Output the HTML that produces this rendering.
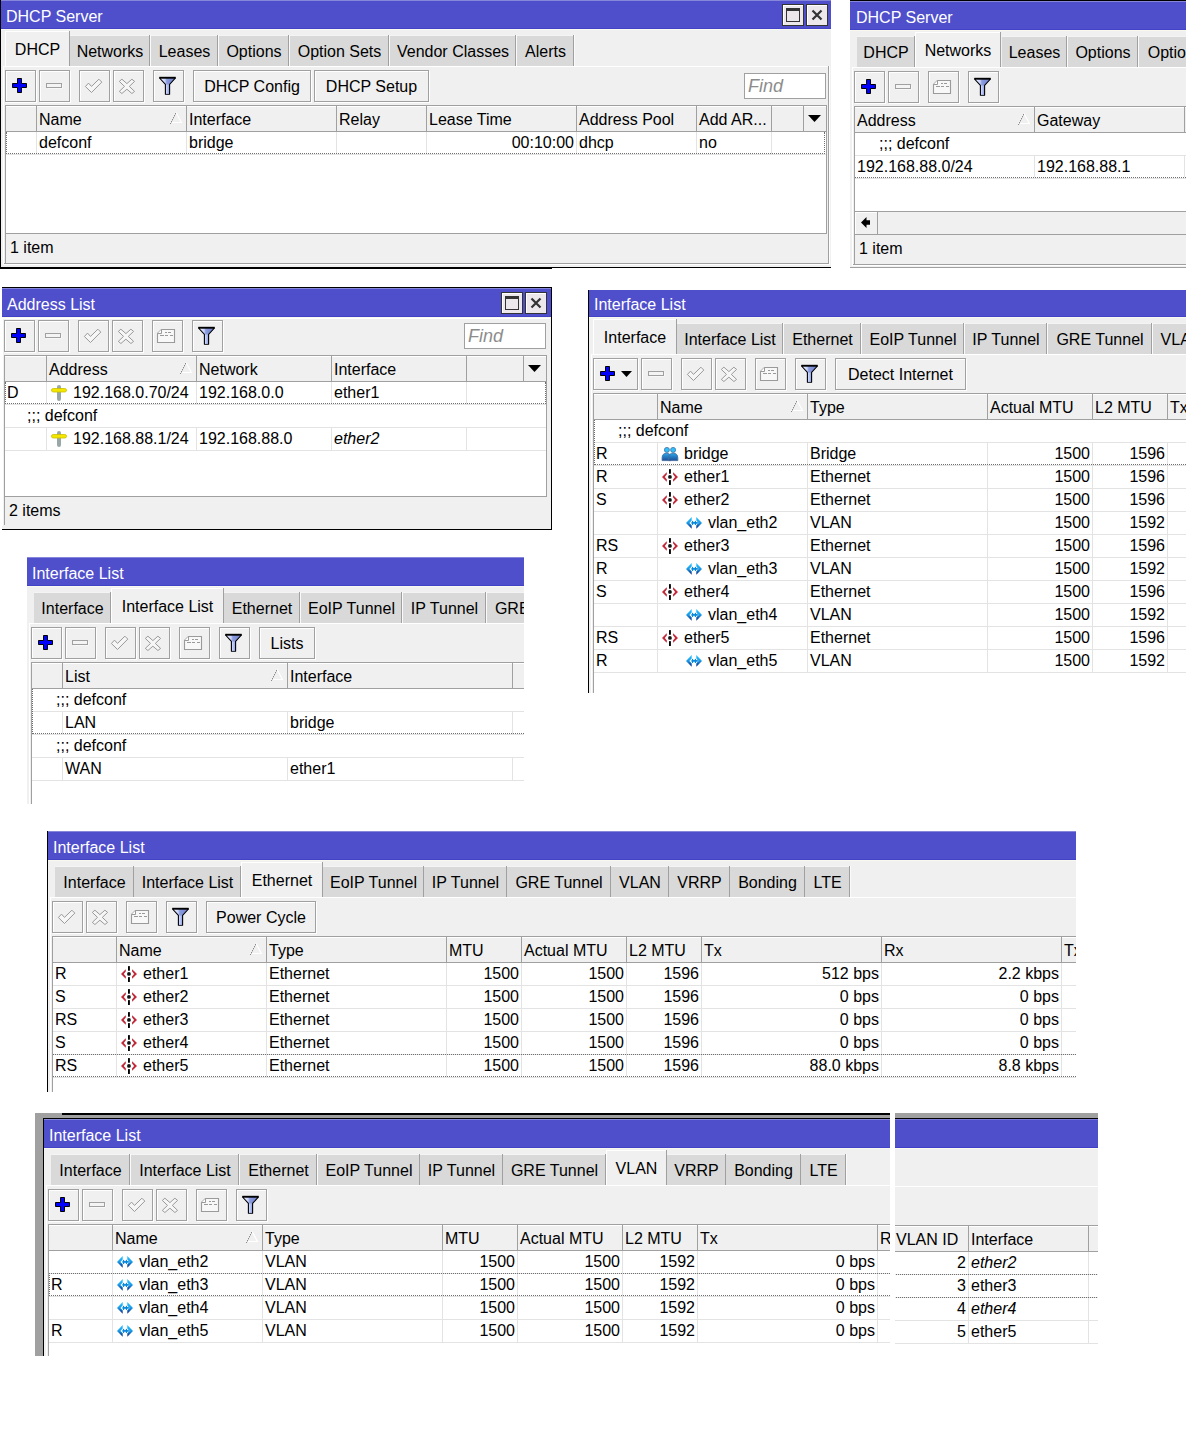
<!DOCTYPE html><html><head><meta charset="utf-8"><style>
html,body{margin:0;padding:0;background:#fff;width:1186px;height:1443px;overflow:hidden;position:relative}
body div, body svg{position:absolute}
.clip{left:0;top:0;width:1186px;height:1443px}
.t{font-family:"Liberation Sans",sans-serif;font-size:16px;color:#000;white-space:nowrap}
</style></head><body>
<div class="clip" style="clip-path:inset(0px 355px 1173px 0px)">
<div style="left:0px;top:0px;width:831px;height:268px;background:#f0f0f0"></div>
<div style="left:0px;top:0px;width:831px;height:29px;background:#4f4fcc"></div>
<div style="left:0px;top:0px;width:831px;height:1px;background:#8686da"></div>
<div style="left:0px;top:28px;width:831px;height:1px;background:#4242c6"></div>
<div style="left:0px;top:29px;width:831px;height:1px;background:#f8f8ee"></div>
<div class="t" style="left:6px;top:2px;height:29px;line-height:29px;color:#fff">DHCP Server</div>
<div style="left:782px;top:4px;width:22px;height:22px;background:#ebe7eb;border:1px solid #333;box-sizing:border-box;box-shadow:inset 1px 1px 0 #fff"></div>
<div style="left:786px;top:8px;width:14px;height:14px;border:1.5px solid #333;border-top-width:3px;box-sizing:border-box"></div>
<div style="left:806px;top:4px;width:22px;height:22px;background:#ebe7eb;border:1px solid #333;box-sizing:border-box;box-shadow:inset 1px 1px 0 #fff"></div>
<svg style="left:811px;top:9px" width="12" height="12" viewBox="0 0 12 12"><path d="M1.5 1.5L10.5 10.5M10.5 1.5L1.5 10.5" stroke="#333" stroke-width="2.2"/></svg>
<div style="left:0px;top:0px;width:1px;height:268px;background:#000"></div>
<div style="left:5px;top:31px;width:65px;height:35px;background:#f0f0f0;border-left:1px solid #fff;border-top:1px solid #fff;box-sizing:border-box"></div>
<div style="left:69px;top:31px;width:1px;height:35px;background:#a0a0a0"></div>
<div class="t" style="left:5px;top:31px;width:65px;height:35px;line-height:37px;text-align:center">DHCP</div>
<div style="left:70px;top:35px;width:80px;height:31px;background:#d9d9d9;border-top:1px solid #f4f4f4;box-sizing:border-box"></div>
<div style="left:149px;top:35px;width:1px;height:31px;background:#a0a0a0"></div>
<div style="left:150px;top:35px;width:1px;height:31px;background:#fafafa"></div>
<div class="t" style="left:70px;top:35px;width:80px;height:31px;line-height:34px;text-align:center">Networks</div>
<div style="left:151px;top:35px;width:67px;height:31px;background:#d9d9d9;border-top:1px solid #f4f4f4;box-sizing:border-box"></div>
<div style="left:217px;top:35px;width:1px;height:31px;background:#a0a0a0"></div>
<div style="left:218px;top:35px;width:1px;height:31px;background:#fafafa"></div>
<div class="t" style="left:151px;top:35px;width:67px;height:31px;line-height:34px;text-align:center">Leases</div>
<div style="left:219px;top:35px;width:70px;height:31px;background:#d9d9d9;border-top:1px solid #f4f4f4;box-sizing:border-box"></div>
<div style="left:288px;top:35px;width:1px;height:31px;background:#a0a0a0"></div>
<div style="left:289px;top:35px;width:1px;height:31px;background:#fafafa"></div>
<div class="t" style="left:219px;top:35px;width:70px;height:31px;line-height:34px;text-align:center">Options</div>
<div style="left:290px;top:35px;width:99px;height:31px;background:#d9d9d9;border-top:1px solid #f4f4f4;box-sizing:border-box"></div>
<div style="left:388px;top:35px;width:1px;height:31px;background:#a0a0a0"></div>
<div style="left:389px;top:35px;width:1px;height:31px;background:#fafafa"></div>
<div class="t" style="left:290px;top:35px;width:99px;height:31px;line-height:34px;text-align:center">Option Sets</div>
<div style="left:390px;top:35px;width:126px;height:31px;background:#d9d9d9;border-top:1px solid #f4f4f4;box-sizing:border-box"></div>
<div style="left:515px;top:35px;width:1px;height:31px;background:#a0a0a0"></div>
<div style="left:516px;top:35px;width:1px;height:31px;background:#fafafa"></div>
<div class="t" style="left:390px;top:35px;width:126px;height:31px;line-height:34px;text-align:center">Vendor Classes</div>
<div style="left:517px;top:35px;width:57px;height:31px;background:#d9d9d9;border-top:1px solid #f4f4f4;box-sizing:border-box"></div>
<div style="left:573px;top:35px;width:1px;height:31px;background:#a0a0a0"></div>
<div style="left:574px;top:35px;width:1px;height:31px;background:#fafafa"></div>
<div class="t" style="left:517px;top:35px;width:57px;height:31px;line-height:34px;text-align:center">Alerts</div>
<div style="left:3px;top:66px;width:826px;height:1px;background:#fff"></div>
<div style="left:3px;top:66px;width:1px;height:198px;background:#fff"></div>
<div style="left:828px;top:66px;width:1px;height:198px;background:#a0a0a0"></div>
<div style="left:829px;top:66px;width:1px;height:199px;background:#fff"></div>
<div style="left:4px;top:263px;width:825px;height:1px;background:#a0a0a0"></div>
<div style="left:3px;top:264px;width:827px;height:1px;background:#fff"></div>
<div style="left:5px;top:70px;width:31px;height:32px;border:1px solid #a0a0a0;box-sizing:border-box;background:#f0f0f0;box-shadow:inset 1px 1px 0 #fff, 1px 1px 0 #fff"></div>
<svg style="left:12px;top:78px" width="15" height="15" viewBox="0 0 15 15"><path d="M5.5 0.5h4v5h5v4h-5v5h-4v-5h-5v-4h5z" fill="#0000ff" stroke="#000" stroke-width="1"/></svg>
<div style="left:39px;top:70px;width:31px;height:32px;border:1px solid #a0a0a0;box-sizing:border-box;background:#f0f0f0;box-shadow:inset 1px 1px 0 #fff, 1px 1px 0 #fff"></div>
<svg style="left:46px;top:83px" width="17" height="6" viewBox="0 0 17 6"><rect x="1.5" y="1.5" width="15" height="4" fill="#fff" stroke="none"/><rect x="0.5" y="0.5" width="15" height="4" fill="#f4f4f4" stroke="#a0a0a0"/></svg>
<div style="left:79px;top:70px;width:31px;height:32px;border:1px solid #a0a0a0;box-sizing:border-box;background:#f0f0f0;box-shadow:inset 1px 1px 0 #fff, 1px 1px 0 #fff"></div>
<svg style="left:79px;top:70px" width="31" height="32" viewBox="0 0 31 32"><path d="M6.4 16.5 L9.5 13.1 L12.5 16.4 L19.9 9.2 L22.8 12.1 L12.5 22.5 Z" fill="#f6f6f6" stroke="#9a9a9a" stroke-width="1" stroke-linejoin="round"/></svg>
<div style="left:113px;top:70px;width:31px;height:32px;border:1px solid #a0a0a0;box-sizing:border-box;background:#f0f0f0;box-shadow:inset 1px 1px 0 #fff, 1px 1px 0 #fff"></div>
<svg style="left:113px;top:70px" width="31" height="32" viewBox="0 0 31 32"><path d="M6.3 11.4 L8.9 9.2 L13.9 13.6 L18.9 9.2 L21.6 11.4 L16.3 16.4 L21.6 21.4 L18.9 23.5 L13.9 19.2 L8.9 23.5 L6.3 21.4 L11.5 16.4 Z" fill="#f6f6f6" stroke="#9a9a9a" stroke-width="1" stroke-linejoin="round"/></svg>
<div style="left:153px;top:70px;width:31px;height:32px;border:1px solid #a0a0a0;box-sizing:border-box;background:#f0f0f0;box-shadow:inset 1px 1px 0 #fff, 1px 1px 0 #fff"></div>
<svg style="left:153px;top:70px" width="31" height="32" viewBox="0 0 31 32"><defs><linearGradient id="fg" x1="0" x2="1" y1="0" y2="0"><stop offset="0" stop-color="#f4f6ff"/><stop offset="0.35" stop-color="#c8d2f8"/><stop offset="0.45" stop-color="#8c9de0"/><stop offset="1" stop-color="#6a7cc8"/></linearGradient><linearGradient id="fs" x1="0" x2="1" y1="0" y2="0"><stop offset="0" stop-color="#d0dcff"/><stop offset="1" stop-color="#98a8e8"/></linearGradient></defs><path d="M6.5 8 H22.5 L16.6 14.4 V24.3 H12.4 V14.4 Z" fill="url(#fg)" stroke="#000" stroke-width="1.1" stroke-linejoin="round"/><rect x="13" y="14.5" width="3" height="9.3" fill="url(#fs)"/><path d="M6.3 7.6 H22.7" stroke="#000" stroke-width="1.6"/></svg>
<div style="left:193px;top:70px;width:118px;height:32px;border:1px solid #a0a0a0;box-sizing:border-box;background:#f0f0f0;box-shadow:inset 1px 1px 0 #fff, 1px 1px 0 #fff"></div>
<div class="t" style="left:193px;top:71px;width:118px;height:32px;line-height:32px;text-align:center">DHCP Config</div>
<div style="left:314px;top:70px;width:115px;height:32px;border:1px solid #a0a0a0;box-sizing:border-box;background:#f0f0f0;box-shadow:inset 1px 1px 0 #fff, 1px 1px 0 #fff"></div>
<div class="t" style="left:314px;top:71px;width:115px;height:32px;line-height:32px;text-align:center">DHCP Setup</div>
<div style="left:744px;top:73px;width:82px;height:26px;background:#fff;border:1px solid #a0a0a0;box-sizing:border-box"></div>
<div class="t" style="left:748px;top:73px;height:26px;line-height:26px;color:#8c8c8c;font-style:italic;font-size:18px">Find</div>
<div style="left:5px;top:105px;width:822px;height:129px;background:#fff"></div>
<div style="left:5px;top:105px;width:821px;height:27px;background:#f0f0f0;border-top:1px solid #a0a0a0;border-left:1px solid #a0a0a0;border-bottom:1px solid #a0a0a0;box-sizing:border-box"></div>
<div style="left:36px;top:105px;width:1px;height:27px;background:#a0a0a0"></div>
<div style="left:6px;top:106px;width:30px;height:1px;background:#fff"></div>
<div style="left:186px;top:105px;width:1px;height:27px;background:#a0a0a0"></div>
<div style="left:37px;top:106px;width:149px;height:1px;background:#fff"></div>
<div class="t" style="left:39px;top:106px;height:26px;line-height:27px">Name</div>
<div style="left:336px;top:105px;width:1px;height:27px;background:#a0a0a0"></div>
<div style="left:187px;top:106px;width:149px;height:1px;background:#fff"></div>
<div class="t" style="left:189px;top:106px;height:26px;line-height:27px">Interface</div>
<div style="left:426px;top:105px;width:1px;height:27px;background:#a0a0a0"></div>
<div style="left:337px;top:106px;width:89px;height:1px;background:#fff"></div>
<div class="t" style="left:339px;top:106px;height:26px;line-height:27px">Relay</div>
<div style="left:576px;top:105px;width:1px;height:27px;background:#a0a0a0"></div>
<div style="left:427px;top:106px;width:149px;height:1px;background:#fff"></div>
<div class="t" style="left:429px;top:106px;height:26px;line-height:27px">Lease Time</div>
<div style="left:696px;top:105px;width:1px;height:27px;background:#a0a0a0"></div>
<div style="left:577px;top:106px;width:119px;height:1px;background:#fff"></div>
<div class="t" style="left:579px;top:106px;height:26px;line-height:27px">Address Pool</div>
<div style="left:771px;top:105px;width:1px;height:27px;background:#a0a0a0"></div>
<div style="left:697px;top:106px;width:74px;height:1px;background:#fff"></div>
<div class="t" style="left:699px;top:106px;height:26px;line-height:27px">Add AR...</div>
<div style="left:803px;top:105px;width:1px;height:27px;background:#a0a0a0"></div>
<div style="left:772px;top:106px;width:31px;height:1px;background:#fff"></div>
<div style="left:826px;top:105px;width:1px;height:27px;background:#a0a0a0"></div>
<div style="left:804px;top:106px;width:22px;height:1px;background:#fff"></div>
<svg style="left:170px;top:112px" width="12" height="12" viewBox="0 0 12 12"><path d="M6 0.5 L11.5 10.5 H0.5" fill="none" stroke="#fff" stroke-width="1.2"/><rect x="5" y="1" width="1" height="1" fill="#8a8a8a"/><rect x="5" y="2" width="1" height="1" fill="#c8c8c8"/><rect x="4" y="3" width="1" height="1" fill="#8a8a8a"/><rect x="4" y="4" width="1" height="1" fill="#c8c8c8"/><rect x="3" y="5" width="1" height="1" fill="#8a8a8a"/><rect x="3" y="6" width="1" height="1" fill="#c8c8c8"/><rect x="2" y="7" width="1" height="1" fill="#8a8a8a"/><rect x="2" y="8" width="1" height="1" fill="#c8c8c8"/><rect x="1" y="9" width="1" height="1" fill="#8a8a8a"/><rect x="1" y="10" width="1" height="1" fill="#c8c8c8"/><rect x="0" y="11" width="1" height="1" fill="#8a8a8a"/><rect x="0" y="12" width="1" height="1" fill="#c8c8c8"/></svg>
<svg style="left:808px;top:115px" width="13" height="7" viewBox="0 0 13 7"><path d="M0 0H13L6.5 7Z" fill="#000"/></svg>
<div style="left:5px;top:132px;width:821px;height:23px;background:#fff"></div>
<div style="left:5px;top:154px;width:821px;height:1px;background:#e3e3e3"></div>
<div style="left:36px;top:132px;width:1px;height:23px;background:#e3e3e3"></div>
<div style="left:186px;top:132px;width:1px;height:23px;background:#e3e3e3"></div>
<div style="left:336px;top:132px;width:1px;height:23px;background:#e3e3e3"></div>
<div style="left:426px;top:132px;width:1px;height:23px;background:#e3e3e3"></div>
<div style="left:576px;top:132px;width:1px;height:23px;background:#e3e3e3"></div>
<div style="left:696px;top:132px;width:1px;height:23px;background:#e3e3e3"></div>
<div style="left:771px;top:132px;width:1px;height:23px;background:#e3e3e3"></div>
<div class="t" style="left:8px;top:132px;height:23px;line-height:22px;"></div>
<div class="t" style="left:39px;top:132px;height:23px;line-height:22px;">defconf</div>
<div class="t" style="left:189px;top:132px;height:23px;line-height:22px;">bridge</div>
<div class="t" style="left:339px;top:132px;height:23px;line-height:22px;"></div>
<div class="t" style="left:426px;width:148px;text-align:right;top:132px;height:23px;line-height:22px;">00:10:00</div>
<div class="t" style="left:579px;top:132px;height:23px;line-height:22px;">dhcp</div>
<div class="t" style="left:699px;top:132px;height:23px;line-height:22px;">no</div>
<div class="t" style="left:774px;top:132px;height:23px;line-height:22px;"></div>
<div class="t" style="left:806px;top:132px;height:23px;line-height:22px;"></div>
<div style="left:6px;top:132px;width:819px;height:22px;border:1px dotted #707070;box-sizing:border-box;border-top:none"></div>
<div style="left:5px;top:105px;width:1px;height:128px;background:#a0a0a0"></div>
<div style="left:826px;top:105px;width:1px;height:128px;background:#a0a0a0"></div>
<div style="left:5px;top:233px;width:822px;height:1px;background:#a0a0a0"></div>
<div style="left:5px;top:233px;width:1px;height:30px;background:#a0a0a0"></div>
<div class="t" style="left:10px;top:233px;height:30px;line-height:30px;">1 item</div>
</div>
<div class="clip" style="clip-path:inset(0px 355px 1173px 0px)">
<div style="left:0px;top:267px;width:552px;height:2px;background:#000"></div>
<div style="left:552px;top:267px;width:279px;height:1px;background:#000"></div>
</div>
<div class="clip" style="clip-path:inset(0px 0px 1173px 850px)">
<div style="left:850px;top:1px;width:400px;height:267px;background:#f0f0f0"></div>
<div style="left:850px;top:1px;width:400px;height:29px;background:#4f4fcc"></div>
<div style="left:850px;top:1px;width:400px;height:1px;background:#8686da"></div>
<div style="left:850px;top:29px;width:400px;height:1px;background:#4242c6"></div>
<div style="left:850px;top:30px;width:400px;height:1px;background:#f8f8ee"></div>
<div class="t" style="left:856px;top:3px;height:29px;line-height:29px;color:#fff">DHCP Server</div>
<div style="left:857px;top:36px;width:58px;height:31px;background:#d9d9d9;border-top:1px solid #f4f4f4;box-sizing:border-box"></div>
<div style="left:914px;top:36px;width:1px;height:31px;background:#a0a0a0"></div>
<div style="left:915px;top:36px;width:1px;height:31px;background:#fafafa"></div>
<div class="t" style="left:857px;top:36px;width:58px;height:31px;line-height:34px;text-align:center">DHCP</div>
<div style="left:915px;top:32px;width:86px;height:35px;background:#f0f0f0;border-left:1px solid #fff;border-top:1px solid #fff;box-sizing:border-box"></div>
<div style="left:1000px;top:32px;width:1px;height:35px;background:#a0a0a0"></div>
<div class="t" style="left:915px;top:32px;width:86px;height:35px;line-height:37px;text-align:center">Networks</div>
<div style="left:1002px;top:36px;width:65px;height:31px;background:#d9d9d9;border-top:1px solid #f4f4f4;box-sizing:border-box"></div>
<div style="left:1066px;top:36px;width:1px;height:31px;background:#a0a0a0"></div>
<div style="left:1067px;top:36px;width:1px;height:31px;background:#fafafa"></div>
<div class="t" style="left:1002px;top:36px;width:65px;height:31px;line-height:34px;text-align:center">Leases</div>
<div style="left:1068px;top:36px;width:70px;height:31px;background:#d9d9d9;border-top:1px solid #f4f4f4;box-sizing:border-box"></div>
<div style="left:1137px;top:36px;width:1px;height:31px;background:#a0a0a0"></div>
<div style="left:1138px;top:36px;width:1px;height:31px;background:#fafafa"></div>
<div class="t" style="left:1068px;top:36px;width:70px;height:31px;line-height:34px;text-align:center">Options</div>
<div style="left:1139px;top:36px;width:101px;height:31px;background:#d9d9d9;border-top:1px solid #f4f4f4;box-sizing:border-box"></div>
<div style="left:1239px;top:36px;width:1px;height:31px;background:#a0a0a0"></div>
<div style="left:1240px;top:36px;width:1px;height:31px;background:#fafafa"></div>
<div class="t" style="left:1139px;top:36px;width:101px;height:31px;line-height:34px;text-align:center">Option Sets</div>
<div style="left:850px;top:0px;width:336px;height:1px;background:#000"></div>
<div style="left:852px;top:67px;width:338px;height:1px;background:#fff"></div>
<div style="left:852px;top:67px;width:1px;height:198px;background:#fff"></div>
<div style="left:1189px;top:67px;width:1px;height:198px;background:#a0a0a0"></div>
<div style="left:1190px;top:67px;width:1px;height:199px;background:#fff"></div>
<div style="left:853px;top:264px;width:337px;height:1px;background:#a0a0a0"></div>
<div style="left:852px;top:265px;width:339px;height:1px;background:#fff"></div>
<div style="left:854px;top:71px;width:31px;height:32px;border:1px solid #a0a0a0;box-sizing:border-box;background:#f0f0f0;box-shadow:inset 1px 1px 0 #fff, 1px 1px 0 #fff"></div>
<svg style="left:861px;top:79px" width="15" height="15" viewBox="0 0 15 15"><path d="M5.5 0.5h4v5h5v4h-5v5h-4v-5h-5v-4h5z" fill="#0000ff" stroke="#000" stroke-width="1"/></svg>
<div style="left:888px;top:71px;width:31px;height:32px;border:1px solid #a0a0a0;box-sizing:border-box;background:#f0f0f0;box-shadow:inset 1px 1px 0 #fff, 1px 1px 0 #fff"></div>
<svg style="left:895px;top:84px" width="17" height="6" viewBox="0 0 17 6"><rect x="1.5" y="1.5" width="15" height="4" fill="#fff" stroke="none"/><rect x="0.5" y="0.5" width="15" height="4" fill="#f4f4f4" stroke="#a0a0a0"/></svg>
<div style="left:928px;top:71px;width:31px;height:32px;border:1px solid #a0a0a0;box-sizing:border-box;background:#f0f0f0;box-shadow:inset 1px 1px 0 #fff, 1px 1px 0 #fff"></div>
<svg style="left:928px;top:71px" width="31" height="32" viewBox="0 0 31 32"><path d="M5.5 13.5 L9.5 9.5 H22.5 V22.5 H5.5 Z" fill="#f8f8f8" stroke="#9a9a9a" stroke-width="1.1"/><path d="M5.5 13.5 H9.5 V9.5" fill="#fff" stroke="#9a9a9a" stroke-width="1"/><path d="M13 12.5h2M16 12.5h3M8 15.5h4M13 15.5h3M18 15.5h3" stroke="#9a9a9a" stroke-width="1"/></svg>
<div style="left:968px;top:71px;width:31px;height:32px;border:1px solid #a0a0a0;box-sizing:border-box;background:#f0f0f0;box-shadow:inset 1px 1px 0 #fff, 1px 1px 0 #fff"></div>
<svg style="left:968px;top:71px" width="31" height="32" viewBox="0 0 31 32"><defs><linearGradient id="fg" x1="0" x2="1" y1="0" y2="0"><stop offset="0" stop-color="#f4f6ff"/><stop offset="0.35" stop-color="#c8d2f8"/><stop offset="0.45" stop-color="#8c9de0"/><stop offset="1" stop-color="#6a7cc8"/></linearGradient><linearGradient id="fs" x1="0" x2="1" y1="0" y2="0"><stop offset="0" stop-color="#d0dcff"/><stop offset="1" stop-color="#98a8e8"/></linearGradient></defs><path d="M6.5 8 H22.5 L16.6 14.4 V24.3 H12.4 V14.4 Z" fill="url(#fg)" stroke="#000" stroke-width="1.1" stroke-linejoin="round"/><rect x="13" y="14.5" width="3" height="9.3" fill="url(#fs)"/><path d="M6.3 7.6 H22.7" stroke="#000" stroke-width="1.6"/></svg>
<div style="left:854px;top:106px;width:340px;height:106px;background:#fff"></div>
<div style="left:854px;top:106px;width:446px;height:27px;background:#f0f0f0;border-top:1px solid #a0a0a0;border-left:1px solid #a0a0a0;border-bottom:1px solid #a0a0a0;box-sizing:border-box"></div>
<div style="left:1034px;top:106px;width:1px;height:27px;background:#a0a0a0"></div>
<div style="left:855px;top:107px;width:179px;height:1px;background:#fff"></div>
<div class="t" style="left:857px;top:107px;height:26px;line-height:27px">Address</div>
<div style="left:1184px;top:106px;width:1px;height:27px;background:#a0a0a0"></div>
<div style="left:1035px;top:107px;width:149px;height:1px;background:#fff"></div>
<div class="t" style="left:1037px;top:107px;height:26px;line-height:27px">Gateway</div>
<div style="left:1300px;top:106px;width:1px;height:27px;background:#a0a0a0"></div>
<div style="left:1185px;top:107px;width:115px;height:1px;background:#fff"></div>
<svg style="left:1018px;top:113px" width="12" height="12" viewBox="0 0 12 12"><path d="M6 0.5 L11.5 10.5 H0.5" fill="none" stroke="#fff" stroke-width="1.2"/><rect x="5" y="1" width="1" height="1" fill="#8a8a8a"/><rect x="5" y="2" width="1" height="1" fill="#c8c8c8"/><rect x="4" y="3" width="1" height="1" fill="#8a8a8a"/><rect x="4" y="4" width="1" height="1" fill="#c8c8c8"/><rect x="3" y="5" width="1" height="1" fill="#8a8a8a"/><rect x="3" y="6" width="1" height="1" fill="#c8c8c8"/><rect x="2" y="7" width="1" height="1" fill="#8a8a8a"/><rect x="2" y="8" width="1" height="1" fill="#c8c8c8"/><rect x="1" y="9" width="1" height="1" fill="#8a8a8a"/><rect x="1" y="10" width="1" height="1" fill="#c8c8c8"/><rect x="0" y="11" width="1" height="1" fill="#8a8a8a"/><rect x="0" y="12" width="1" height="1" fill="#c8c8c8"/></svg>
<div style="left:854px;top:133px;width:446px;height:23px;background:#fff"></div>
<div style="left:854px;top:155px;width:446px;height:1px;background:#e3e3e3"></div>
<div class="t" style="left:879px;top:133px;height:23px;line-height:22px">;;; defconf</div>
<div style="left:854px;top:156px;width:446px;height:23px;background:#fff"></div>
<div style="left:854px;top:178px;width:446px;height:1px;background:#e3e3e3"></div>
<div style="left:1034px;top:156px;width:1px;height:23px;background:#e3e3e3"></div>
<div style="left:1184px;top:156px;width:1px;height:23px;background:#e3e3e3"></div>
<div style="left:1300px;top:156px;width:1px;height:23px;background:#e3e3e3"></div>
<div class="t" style="left:857px;top:156px;height:23px;line-height:22px;">192.168.88.0/24</div>
<div class="t" style="left:1037px;top:156px;height:23px;line-height:22px;">192.168.88.1</div>
<div class="t" style="left:1187px;top:156px;height:23px;line-height:22px;"></div>
<div style="left:855px;top:177px;width:335px;height:1px;background:#fff"></div>
<div style="left:855px;top:177px;width:335px;height:1px;border-top:1px dotted #707070;box-sizing:border-box"></div>
<div style="left:854px;top:106px;width:1px;height:130px;background:#a0a0a0"></div>
<div style="left:854px;top:211px;width:340px;height:1px;background:#a0a0a0"></div>
<div style="left:855px;top:212px;width:330px;height:22px;background:#f0f0f0"></div>
<div style="left:855px;top:212px;width:22px;height:22px;background:#f0f0f0;border-right:1px solid #a0a0a0;box-shadow:inset 1px 1px 0 #fff"></div>
<svg style="left:861px;top:217px" width="9" height="12" viewBox="0 0 9 12"><path d="M0 5.5L5.5 0V3.3H9V7.7H5.5V11Z" fill="#000"/></svg>
<div style="left:854px;top:234px;width:336px;height:1px;background:#a0a0a0"></div>
<div style="left:854px;top:234px;width:1px;height:30px;background:#a0a0a0"></div>
<div class="t" style="left:859px;top:234px;height:30px;line-height:30px;">1 item</div>
<div style="left:850px;top:267px;width:336px;height:1px;background:#a0a0a0"></div>
</div>
<div class="clip" style="clip-path:inset(287px 633px 912px 2px)">
<div style="left:-1px;top:288px;width:552px;height:241px;background:#f0f0f0"></div>
<div style="left:-1px;top:288px;width:552px;height:29px;background:#4f4fcc"></div>
<div style="left:-1px;top:288px;width:552px;height:1px;background:#8686da"></div>
<div style="left:-1px;top:316px;width:552px;height:1px;background:#4242c6"></div>
<div style="left:-1px;top:317px;width:552px;height:1px;background:#f8f8ee"></div>
<div class="t" style="left:7px;top:290px;height:29px;line-height:29px;color:#fff">Address List</div>
<div style="left:501px;top:292px;width:22px;height:22px;background:#ebe7eb;border:1px solid #333;box-sizing:border-box;box-shadow:inset 1px 1px 0 #fff"></div>
<div style="left:505px;top:296px;width:14px;height:14px;border:1.5px solid #333;border-top-width:3px;box-sizing:border-box"></div>
<div style="left:525px;top:292px;width:22px;height:22px;background:#ebe7eb;border:1px solid #333;box-sizing:border-box;box-shadow:inset 1px 1px 0 #fff"></div>
<svg style="left:530px;top:297px" width="12" height="12" viewBox="0 0 12 12"><path d="M1.5 1.5L10.5 10.5M10.5 1.5L1.5 10.5" stroke="#333" stroke-width="2.2"/></svg>
<div style="left:2px;top:287px;width:550px;height:1px;background:#000"></div>
<div style="left:2px;top:318px;width:548px;height:1px;background:#fff"></div>
<div style="left:2px;top:318px;width:1px;height:208px;background:#fff"></div>
<div style="left:4px;top:320px;width:31px;height:32px;border:1px solid #a0a0a0;box-sizing:border-box;background:#f0f0f0;box-shadow:inset 1px 1px 0 #fff, 1px 1px 0 #fff"></div>
<svg style="left:11px;top:328px" width="15" height="15" viewBox="0 0 15 15"><path d="M5.5 0.5h4v5h5v4h-5v5h-4v-5h-5v-4h5z" fill="#0000ff" stroke="#000" stroke-width="1"/></svg>
<div style="left:38px;top:320px;width:31px;height:32px;border:1px solid #a0a0a0;box-sizing:border-box;background:#f0f0f0;box-shadow:inset 1px 1px 0 #fff, 1px 1px 0 #fff"></div>
<svg style="left:45px;top:333px" width="17" height="6" viewBox="0 0 17 6"><rect x="1.5" y="1.5" width="15" height="4" fill="#fff" stroke="none"/><rect x="0.5" y="0.5" width="15" height="4" fill="#f4f4f4" stroke="#a0a0a0"/></svg>
<div style="left:78px;top:320px;width:31px;height:32px;border:1px solid #a0a0a0;box-sizing:border-box;background:#f0f0f0;box-shadow:inset 1px 1px 0 #fff, 1px 1px 0 #fff"></div>
<svg style="left:78px;top:320px" width="31" height="32" viewBox="0 0 31 32"><path d="M6.4 16.5 L9.5 13.1 L12.5 16.4 L19.9 9.2 L22.8 12.1 L12.5 22.5 Z" fill="#f6f6f6" stroke="#9a9a9a" stroke-width="1" stroke-linejoin="round"/></svg>
<div style="left:112px;top:320px;width:31px;height:32px;border:1px solid #a0a0a0;box-sizing:border-box;background:#f0f0f0;box-shadow:inset 1px 1px 0 #fff, 1px 1px 0 #fff"></div>
<svg style="left:112px;top:320px" width="31" height="32" viewBox="0 0 31 32"><path d="M6.3 11.4 L8.9 9.2 L13.9 13.6 L18.9 9.2 L21.6 11.4 L16.3 16.4 L21.6 21.4 L18.9 23.5 L13.9 19.2 L8.9 23.5 L6.3 21.4 L11.5 16.4 Z" fill="#f6f6f6" stroke="#9a9a9a" stroke-width="1" stroke-linejoin="round"/></svg>
<div style="left:152px;top:320px;width:31px;height:32px;border:1px solid #a0a0a0;box-sizing:border-box;background:#f0f0f0;box-shadow:inset 1px 1px 0 #fff, 1px 1px 0 #fff"></div>
<svg style="left:152px;top:320px" width="31" height="32" viewBox="0 0 31 32"><path d="M5.5 13.5 L9.5 9.5 H22.5 V22.5 H5.5 Z" fill="#f8f8f8" stroke="#9a9a9a" stroke-width="1.1"/><path d="M5.5 13.5 H9.5 V9.5" fill="#fff" stroke="#9a9a9a" stroke-width="1"/><path d="M13 12.5h2M16 12.5h3M8 15.5h4M13 15.5h3M18 15.5h3" stroke="#9a9a9a" stroke-width="1"/></svg>
<div style="left:192px;top:320px;width:31px;height:32px;border:1px solid #a0a0a0;box-sizing:border-box;background:#f0f0f0;box-shadow:inset 1px 1px 0 #fff, 1px 1px 0 #fff"></div>
<svg style="left:192px;top:320px" width="31" height="32" viewBox="0 0 31 32"><defs><linearGradient id="fg" x1="0" x2="1" y1="0" y2="0"><stop offset="0" stop-color="#f4f6ff"/><stop offset="0.35" stop-color="#c8d2f8"/><stop offset="0.45" stop-color="#8c9de0"/><stop offset="1" stop-color="#6a7cc8"/></linearGradient><linearGradient id="fs" x1="0" x2="1" y1="0" y2="0"><stop offset="0" stop-color="#d0dcff"/><stop offset="1" stop-color="#98a8e8"/></linearGradient></defs><path d="M6.5 8 H22.5 L16.6 14.4 V24.3 H12.4 V14.4 Z" fill="url(#fg)" stroke="#000" stroke-width="1.1" stroke-linejoin="round"/><rect x="13" y="14.5" width="3" height="9.3" fill="url(#fs)"/><path d="M6.3 7.6 H22.7" stroke="#000" stroke-width="1.6"/></svg>
<div style="left:464px;top:323px;width:82px;height:26px;background:#fff;border:1px solid #a0a0a0;box-sizing:border-box"></div>
<div class="t" style="left:468px;top:323px;height:26px;line-height:26px;color:#8c8c8c;font-style:italic;font-size:18px">Find</div>
<div style="left:4px;top:355px;width:543px;height:142px;background:#fff"></div>
<div style="left:4px;top:355px;width:542px;height:27px;background:#f0f0f0;border-top:1px solid #a0a0a0;border-left:1px solid #a0a0a0;border-bottom:1px solid #a0a0a0;box-sizing:border-box"></div>
<div style="left:46px;top:355px;width:1px;height:27px;background:#a0a0a0"></div>
<div style="left:5px;top:356px;width:41px;height:1px;background:#fff"></div>
<div style="left:196px;top:355px;width:1px;height:27px;background:#a0a0a0"></div>
<div style="left:47px;top:356px;width:149px;height:1px;background:#fff"></div>
<div class="t" style="left:49px;top:356px;height:26px;line-height:27px">Address</div>
<div style="left:331px;top:355px;width:1px;height:27px;background:#a0a0a0"></div>
<div style="left:197px;top:356px;width:134px;height:1px;background:#fff"></div>
<div class="t" style="left:199px;top:356px;height:26px;line-height:27px">Network</div>
<div style="left:466px;top:355px;width:1px;height:27px;background:#a0a0a0"></div>
<div style="left:332px;top:356px;width:134px;height:1px;background:#fff"></div>
<div class="t" style="left:334px;top:356px;height:26px;line-height:27px">Interface</div>
<div style="left:523px;top:355px;width:1px;height:27px;background:#a0a0a0"></div>
<div style="left:467px;top:356px;width:56px;height:1px;background:#fff"></div>
<div style="left:546px;top:355px;width:1px;height:27px;background:#a0a0a0"></div>
<div style="left:524px;top:356px;width:22px;height:1px;background:#fff"></div>
<svg style="left:180px;top:362px" width="12" height="12" viewBox="0 0 12 12"><path d="M6 0.5 L11.5 10.5 H0.5" fill="none" stroke="#fff" stroke-width="1.2"/><rect x="5" y="1" width="1" height="1" fill="#8a8a8a"/><rect x="5" y="2" width="1" height="1" fill="#c8c8c8"/><rect x="4" y="3" width="1" height="1" fill="#8a8a8a"/><rect x="4" y="4" width="1" height="1" fill="#c8c8c8"/><rect x="3" y="5" width="1" height="1" fill="#8a8a8a"/><rect x="3" y="6" width="1" height="1" fill="#c8c8c8"/><rect x="2" y="7" width="1" height="1" fill="#8a8a8a"/><rect x="2" y="8" width="1" height="1" fill="#c8c8c8"/><rect x="1" y="9" width="1" height="1" fill="#8a8a8a"/><rect x="1" y="10" width="1" height="1" fill="#c8c8c8"/><rect x="0" y="11" width="1" height="1" fill="#8a8a8a"/><rect x="0" y="12" width="1" height="1" fill="#c8c8c8"/></svg>
<svg style="left:528px;top:365px" width="13" height="7" viewBox="0 0 13 7"><path d="M0 0H13L6.5 7Z" fill="#000"/></svg>
<div style="left:4px;top:382px;width:542px;height:23px;background:#fff"></div>
<div style="left:4px;top:404px;width:542px;height:1px;background:#e3e3e3"></div>
<div style="left:46px;top:382px;width:1px;height:23px;background:#e3e3e3"></div>
<div style="left:196px;top:382px;width:1px;height:23px;background:#e3e3e3"></div>
<div style="left:331px;top:382px;width:1px;height:23px;background:#e3e3e3"></div>
<div style="left:466px;top:382px;width:1px;height:23px;background:#e3e3e3"></div>
<div class="t" style="left:7px;top:382px;height:23px;line-height:22px;">D</div>
<svg style="left:51px;top:385px" width="17" height="17" viewBox="0 0 17 17"><rect x="6" y="0" width="4" height="16" rx="2" fill="#9aa7a7"/><rect x="0.5" y="3.5" width="15" height="3.5" rx="1.7" fill="#f5e600" stroke="#c8c000" stroke-width="0.8"/></svg>
<div class="t" style="left:73px;top:382px;height:23px;line-height:22px;">192.168.0.70/24</div>
<div class="t" style="left:199px;top:382px;height:23px;line-height:22px;">192.168.0.0</div>
<div class="t" style="left:334px;top:382px;height:23px;line-height:22px;">ether1</div>
<div class="t" style="left:469px;top:382px;height:23px;line-height:22px;"></div>
<div class="t" style="left:526px;top:382px;height:23px;line-height:22px;"></div>
<div style="left:4px;top:405px;width:542px;height:23px;background:#fff"></div>
<div style="left:4px;top:427px;width:542px;height:1px;background:#e3e3e3"></div>
<div class="t" style="left:27px;top:405px;height:23px;line-height:22px">;;; defconf</div>
<div style="left:4px;top:428px;width:542px;height:23px;background:#fff"></div>
<div style="left:4px;top:450px;width:542px;height:1px;background:#e3e3e3"></div>
<div style="left:46px;top:428px;width:1px;height:23px;background:#e3e3e3"></div>
<div style="left:196px;top:428px;width:1px;height:23px;background:#e3e3e3"></div>
<div style="left:331px;top:428px;width:1px;height:23px;background:#e3e3e3"></div>
<div style="left:466px;top:428px;width:1px;height:23px;background:#e3e3e3"></div>
<div class="t" style="left:7px;top:428px;height:23px;line-height:22px;"></div>
<svg style="left:51px;top:431px" width="17" height="17" viewBox="0 0 17 17"><rect x="6" y="0" width="4" height="16" rx="2" fill="#9aa7a7"/><rect x="0.5" y="3.5" width="15" height="3.5" rx="1.7" fill="#f5e600" stroke="#c8c000" stroke-width="0.8"/></svg>
<div class="t" style="left:73px;top:428px;height:23px;line-height:22px;">192.168.88.1/24</div>
<div class="t" style="left:199px;top:428px;height:23px;line-height:22px;">192.168.88.0</div>
<div class="t" style="left:334px;top:428px;height:23px;line-height:22px;font-style:italic">ether2</div>
<div class="t" style="left:469px;top:428px;height:23px;line-height:22px;"></div>
<div class="t" style="left:526px;top:428px;height:23px;line-height:22px;"></div>
<div style="left:5px;top:382px;width:541px;height:22px;border:1px dotted #707070;box-sizing:border-box;border-top:none"></div>
<div style="left:4px;top:355px;width:1px;height:142px;background:#a0a0a0"></div>
<div style="left:546px;top:355px;width:1px;height:142px;background:#a0a0a0"></div>
<div style="left:4px;top:496px;width:543px;height:1px;background:#a0a0a0"></div>
<div style="left:4px;top:496px;width:1px;height:29px;background:#a0a0a0"></div>
<div class="t" style="left:9px;top:496px;height:29px;line-height:29px;">2 items</div>
<div style="left:551px;top:287px;width:1px;height:243px;background:#000"></div>
<div style="left:2px;top:529px;width:550px;height:1px;background:#000"></div>
</div>
<div class="clip" style="clip-path:inset(290px 0px 750px 588px)">
<div style="left:588px;top:288px;width:700px;height:405px;background:#f0f0f0"></div>
<div style="left:588px;top:288px;width:700px;height:29px;background:#4f4fcc"></div>
<div style="left:588px;top:288px;width:700px;height:1px;background:#8686da"></div>
<div style="left:588px;top:316px;width:700px;height:1px;background:#4242c6"></div>
<div style="left:588px;top:317px;width:700px;height:1px;background:#f8f8ee"></div>
<div class="t" style="left:594px;top:290px;height:29px;line-height:29px;color:#fff">Interface List</div>
<div style="left:588px;top:288px;width:1px;height:405px;background:#000"></div>
<div style="left:593px;top:319px;width:84px;height:35px;background:#f0f0f0;border-left:1px solid #fff;border-top:1px solid #fff;box-sizing:border-box"></div>
<div style="left:676px;top:319px;width:1px;height:35px;background:#a0a0a0"></div>
<div class="t" style="left:593px;top:319px;width:84px;height:35px;line-height:37px;text-align:center">Interface</div>
<div style="left:677px;top:323px;width:106px;height:31px;background:#d9d9d9;border-top:1px solid #f4f4f4;box-sizing:border-box"></div>
<div style="left:782px;top:323px;width:1px;height:31px;background:#a0a0a0"></div>
<div style="left:783px;top:323px;width:1px;height:31px;background:#fafafa"></div>
<div class="t" style="left:677px;top:323px;width:106px;height:31px;line-height:34px;text-align:center">Interface List</div>
<div style="left:784px;top:323px;width:77px;height:31px;background:#d9d9d9;border-top:1px solid #f4f4f4;box-sizing:border-box"></div>
<div style="left:860px;top:323px;width:1px;height:31px;background:#a0a0a0"></div>
<div style="left:861px;top:323px;width:1px;height:31px;background:#fafafa"></div>
<div class="t" style="left:784px;top:323px;width:77px;height:31px;line-height:34px;text-align:center">Ethernet</div>
<div style="left:862px;top:323px;width:102px;height:31px;background:#d9d9d9;border-top:1px solid #f4f4f4;box-sizing:border-box"></div>
<div style="left:963px;top:323px;width:1px;height:31px;background:#a0a0a0"></div>
<div style="left:964px;top:323px;width:1px;height:31px;background:#fafafa"></div>
<div class="t" style="left:862px;top:323px;width:102px;height:31px;line-height:34px;text-align:center">EoIP Tunnel</div>
<div style="left:965px;top:323px;width:82px;height:31px;background:#d9d9d9;border-top:1px solid #f4f4f4;box-sizing:border-box"></div>
<div style="left:1046px;top:323px;width:1px;height:31px;background:#a0a0a0"></div>
<div style="left:1047px;top:323px;width:1px;height:31px;background:#fafafa"></div>
<div class="t" style="left:965px;top:323px;width:82px;height:31px;line-height:34px;text-align:center">IP Tunnel</div>
<div style="left:1048px;top:323px;width:104px;height:31px;background:#d9d9d9;border-top:1px solid #f4f4f4;box-sizing:border-box"></div>
<div style="left:1151px;top:323px;width:1px;height:31px;background:#a0a0a0"></div>
<div style="left:1152px;top:323px;width:1px;height:31px;background:#fafafa"></div>
<div class="t" style="left:1048px;top:323px;width:104px;height:31px;line-height:34px;text-align:center">GRE Tunnel</div>
<div style="left:1153px;top:323px;width:57px;height:31px;background:#d9d9d9;border-top:1px solid #f4f4f4;box-sizing:border-box"></div>
<div style="left:1209px;top:323px;width:1px;height:31px;background:#a0a0a0"></div>
<div style="left:1210px;top:323px;width:1px;height:31px;background:#fafafa"></div>
<div class="t" style="left:1153px;top:323px;width:57px;height:31px;line-height:34px;text-align:center">VLAN</div>
<div style="left:591px;top:354px;width:600px;height:1px;background:#fff"></div>
<div style="left:591px;top:354px;width:1px;height:340px;background:#fff"></div>
<div style="left:593px;top:358px;width:45px;height:32px;border:1px solid #a0a0a0;box-sizing:border-box;background:#f0f0f0;box-shadow:inset 1px 1px 0 #fff, 1px 1px 0 #fff"></div>
<svg style="left:600px;top:366px" width="15" height="15" viewBox="0 0 15 15"><path d="M5.5 0.5h4v5h5v4h-5v5h-4v-5h-5v-4h5z" fill="#0000ff" stroke="#000" stroke-width="1"/></svg>
<svg style="left:621px;top:371px" width="11" height="6" viewBox="0 0 11 6"><path d="M0 0H11L5.5 6Z" fill="#000"/></svg>
<div style="left:641px;top:358px;width:31px;height:32px;border:1px solid #a0a0a0;box-sizing:border-box;background:#f0f0f0;box-shadow:inset 1px 1px 0 #fff, 1px 1px 0 #fff"></div>
<svg style="left:648px;top:371px" width="17" height="6" viewBox="0 0 17 6"><rect x="1.5" y="1.5" width="15" height="4" fill="#fff" stroke="none"/><rect x="0.5" y="0.5" width="15" height="4" fill="#f4f4f4" stroke="#a0a0a0"/></svg>
<div style="left:681px;top:358px;width:31px;height:32px;border:1px solid #a0a0a0;box-sizing:border-box;background:#f0f0f0;box-shadow:inset 1px 1px 0 #fff, 1px 1px 0 #fff"></div>
<svg style="left:681px;top:358px" width="31" height="32" viewBox="0 0 31 32"><path d="M6.4 16.5 L9.5 13.1 L12.5 16.4 L19.9 9.2 L22.8 12.1 L12.5 22.5 Z" fill="#f6f6f6" stroke="#9a9a9a" stroke-width="1" stroke-linejoin="round"/></svg>
<div style="left:715px;top:358px;width:31px;height:32px;border:1px solid #a0a0a0;box-sizing:border-box;background:#f0f0f0;box-shadow:inset 1px 1px 0 #fff, 1px 1px 0 #fff"></div>
<svg style="left:715px;top:358px" width="31" height="32" viewBox="0 0 31 32"><path d="M6.3 11.4 L8.9 9.2 L13.9 13.6 L18.9 9.2 L21.6 11.4 L16.3 16.4 L21.6 21.4 L18.9 23.5 L13.9 19.2 L8.9 23.5 L6.3 21.4 L11.5 16.4 Z" fill="#f6f6f6" stroke="#9a9a9a" stroke-width="1" stroke-linejoin="round"/></svg>
<div style="left:755px;top:358px;width:31px;height:32px;border:1px solid #a0a0a0;box-sizing:border-box;background:#f0f0f0;box-shadow:inset 1px 1px 0 #fff, 1px 1px 0 #fff"></div>
<svg style="left:755px;top:358px" width="31" height="32" viewBox="0 0 31 32"><path d="M5.5 13.5 L9.5 9.5 H22.5 V22.5 H5.5 Z" fill="#f8f8f8" stroke="#9a9a9a" stroke-width="1.1"/><path d="M5.5 13.5 H9.5 V9.5" fill="#fff" stroke="#9a9a9a" stroke-width="1"/><path d="M13 12.5h2M16 12.5h3M8 15.5h4M13 15.5h3M18 15.5h3" stroke="#9a9a9a" stroke-width="1"/></svg>
<div style="left:795px;top:358px;width:31px;height:32px;border:1px solid #a0a0a0;box-sizing:border-box;background:#f0f0f0;box-shadow:inset 1px 1px 0 #fff, 1px 1px 0 #fff"></div>
<svg style="left:795px;top:358px" width="31" height="32" viewBox="0 0 31 32"><defs><linearGradient id="fg" x1="0" x2="1" y1="0" y2="0"><stop offset="0" stop-color="#f4f6ff"/><stop offset="0.35" stop-color="#c8d2f8"/><stop offset="0.45" stop-color="#8c9de0"/><stop offset="1" stop-color="#6a7cc8"/></linearGradient><linearGradient id="fs" x1="0" x2="1" y1="0" y2="0"><stop offset="0" stop-color="#d0dcff"/><stop offset="1" stop-color="#98a8e8"/></linearGradient></defs><path d="M6.5 8 H22.5 L16.6 14.4 V24.3 H12.4 V14.4 Z" fill="url(#fg)" stroke="#000" stroke-width="1.1" stroke-linejoin="round"/><rect x="13" y="14.5" width="3" height="9.3" fill="url(#fs)"/><path d="M6.3 7.6 H22.7" stroke="#000" stroke-width="1.6"/></svg>
<div style="left:835px;top:358px;width:131px;height:32px;border:1px solid #a0a0a0;box-sizing:border-box;background:#f0f0f0;box-shadow:inset 1px 1px 0 #fff, 1px 1px 0 #fff"></div>
<div class="t" style="left:835px;top:359px;width:131px;height:32px;line-height:32px;text-align:center">Detect Internet</div>
<div style="left:593px;top:393px;width:600px;height:300px;background:#fff"></div>
<div style="left:593px;top:393px;width:707px;height:27px;background:#f0f0f0;border-top:1px solid #a0a0a0;border-left:1px solid #a0a0a0;border-bottom:1px solid #a0a0a0;box-sizing:border-box"></div>
<div style="left:657px;top:393px;width:1px;height:27px;background:#a0a0a0"></div>
<div style="left:594px;top:394px;width:63px;height:1px;background:#fff"></div>
<div style="left:807px;top:393px;width:1px;height:27px;background:#a0a0a0"></div>
<div style="left:658px;top:394px;width:149px;height:1px;background:#fff"></div>
<div class="t" style="left:660px;top:394px;height:26px;line-height:27px">Name</div>
<div style="left:987px;top:393px;width:1px;height:27px;background:#a0a0a0"></div>
<div style="left:808px;top:394px;width:179px;height:1px;background:#fff"></div>
<div class="t" style="left:810px;top:394px;height:26px;line-height:27px">Type</div>
<div style="left:1092px;top:393px;width:1px;height:27px;background:#a0a0a0"></div>
<div style="left:988px;top:394px;width:104px;height:1px;background:#fff"></div>
<div class="t" style="left:990px;top:394px;height:26px;line-height:27px">Actual MTU</div>
<div style="left:1167px;top:393px;width:1px;height:27px;background:#a0a0a0"></div>
<div style="left:1093px;top:394px;width:74px;height:1px;background:#fff"></div>
<div class="t" style="left:1095px;top:394px;height:26px;line-height:27px">L2 MTU</div>
<div style="left:1300px;top:393px;width:1px;height:27px;background:#a0a0a0"></div>
<div style="left:1168px;top:394px;width:132px;height:1px;background:#fff"></div>
<div class="t" style="left:1170px;top:394px;height:26px;line-height:27px">Tx</div>
<svg style="left:791px;top:400px" width="12" height="12" viewBox="0 0 12 12"><path d="M6 0.5 L11.5 10.5 H0.5" fill="none" stroke="#fff" stroke-width="1.2"/><rect x="5" y="1" width="1" height="1" fill="#8a8a8a"/><rect x="5" y="2" width="1" height="1" fill="#c8c8c8"/><rect x="4" y="3" width="1" height="1" fill="#8a8a8a"/><rect x="4" y="4" width="1" height="1" fill="#c8c8c8"/><rect x="3" y="5" width="1" height="1" fill="#8a8a8a"/><rect x="3" y="6" width="1" height="1" fill="#c8c8c8"/><rect x="2" y="7" width="1" height="1" fill="#8a8a8a"/><rect x="2" y="8" width="1" height="1" fill="#c8c8c8"/><rect x="1" y="9" width="1" height="1" fill="#8a8a8a"/><rect x="1" y="10" width="1" height="1" fill="#c8c8c8"/><rect x="0" y="11" width="1" height="1" fill="#8a8a8a"/><rect x="0" y="12" width="1" height="1" fill="#c8c8c8"/></svg>
<div style="left:593px;top:420px;width:707px;height:23px;background:#fff"></div>
<div style="left:593px;top:442px;width:707px;height:1px;background:#e3e3e3"></div>
<div class="t" style="left:618px;top:420px;height:23px;line-height:22px">;;; defconf</div>
<div style="left:593px;top:443px;width:707px;height:23px;background:#fff"></div>
<div style="left:593px;top:465px;width:707px;height:1px;background:#e3e3e3"></div>
<div style="left:657px;top:443px;width:1px;height:23px;background:#e3e3e3"></div>
<div style="left:807px;top:443px;width:1px;height:23px;background:#e3e3e3"></div>
<div style="left:987px;top:443px;width:1px;height:23px;background:#e3e3e3"></div>
<div style="left:1092px;top:443px;width:1px;height:23px;background:#e3e3e3"></div>
<div style="left:1167px;top:443px;width:1px;height:23px;background:#e3e3e3"></div>
<div style="left:1300px;top:443px;width:1px;height:23px;background:#e3e3e3"></div>
<div class="t" style="left:596px;top:443px;height:23px;line-height:22px;">R</div>
<svg style="left:661px;top:447px" width="18" height="16" viewBox="0 0 18 16"><defs><linearGradient id="bg" x1="0" x2="0" y1="0" y2="1"><stop offset="0" stop-color="#2aa6ea"/><stop offset="1" stop-color="#1c4f98"/></linearGradient></defs><circle cx="5.9" cy="2.9" r="2.5" fill="#2cc0fc" stroke="#4a7aa6" stroke-width="0.9"/><circle cx="12.1" cy="2.9" r="2.5" fill="#2cc0fc" stroke="#4a7aa6" stroke-width="0.9"/><path d="M1.1 13.6 V11 C1.1 7.6 3 6.2 5.5 6.2 C8 6.2 9.9 7.6 9.9 11 V13.6 Z" fill="url(#bg)" stroke="#466e9c" stroke-width="0.9"/><path d="M7.6 13.6 V11 C7.6 7.6 9.6 6.2 12.2 6.2 C14.8 6.2 16.8 7.6 16.8 11 V13.6 Z" fill="url(#bg)" stroke="#466e9c" stroke-width="0.9"/></svg>
<div class="t" style="left:684px;top:443px;height:23px;line-height:22px;">bridge</div>
<div class="t" style="left:810px;top:443px;height:23px;line-height:22px;">Bridge</div>
<div class="t" style="left:987px;width:103px;text-align:right;top:443px;height:23px;line-height:22px;">1500</div>
<div class="t" style="left:1092px;width:73px;text-align:right;top:443px;height:23px;line-height:22px;">1596</div>
<div class="t" style="left:1167px;width:131px;text-align:right;top:443px;height:23px;line-height:22px;"></div>
<div style="left:593px;top:466px;width:707px;height:23px;background:#fff"></div>
<div style="left:593px;top:488px;width:707px;height:1px;background:#e3e3e3"></div>
<div style="left:657px;top:466px;width:1px;height:23px;background:#e3e3e3"></div>
<div style="left:807px;top:466px;width:1px;height:23px;background:#e3e3e3"></div>
<div style="left:987px;top:466px;width:1px;height:23px;background:#e3e3e3"></div>
<div style="left:1092px;top:466px;width:1px;height:23px;background:#e3e3e3"></div>
<div style="left:1167px;top:466px;width:1px;height:23px;background:#e3e3e3"></div>
<div style="left:1300px;top:466px;width:1px;height:23px;background:#e3e3e3"></div>
<div class="t" style="left:596px;top:466px;height:23px;line-height:22px;">R</div>
<svg style="left:662px;top:469px" width="17" height="17" viewBox="0 0 17 17"><path d="M4.7 3.2 L4.9 5.3 L2.8 7.9 L4.9 10.5 L4.7 12.8 L0 7.9 Z" fill="#c02a3a"/><path d="M11.2 3.2 L11 5.3 L13.1 7.9 L11 10.5 L11.2 12.8 L16 7.9 Z" fill="#c02a3a"/><rect x="7" y="0" width="1.9" height="4.8" rx="0.5" fill="#000"/><rect x="7" y="11.1" width="1.9" height="4.8" rx="0.5" fill="#000"/><circle cx="7.95" cy="7.95" r="1.9" fill="#111"/></svg>
<div class="t" style="left:684px;top:466px;height:23px;line-height:22px;">ether1</div>
<div class="t" style="left:810px;top:466px;height:23px;line-height:22px;">Ethernet</div>
<div class="t" style="left:987px;width:103px;text-align:right;top:466px;height:23px;line-height:22px;">1500</div>
<div class="t" style="left:1092px;width:73px;text-align:right;top:466px;height:23px;line-height:22px;">1596</div>
<div class="t" style="left:1167px;width:131px;text-align:right;top:466px;height:23px;line-height:22px;"></div>
<div style="left:593px;top:489px;width:707px;height:23px;background:#fff"></div>
<div style="left:593px;top:511px;width:707px;height:1px;background:#e3e3e3"></div>
<div style="left:657px;top:489px;width:1px;height:23px;background:#e3e3e3"></div>
<div style="left:807px;top:489px;width:1px;height:23px;background:#e3e3e3"></div>
<div style="left:987px;top:489px;width:1px;height:23px;background:#e3e3e3"></div>
<div style="left:1092px;top:489px;width:1px;height:23px;background:#e3e3e3"></div>
<div style="left:1167px;top:489px;width:1px;height:23px;background:#e3e3e3"></div>
<div style="left:1300px;top:489px;width:1px;height:23px;background:#e3e3e3"></div>
<div class="t" style="left:596px;top:489px;height:23px;line-height:22px;">S</div>
<svg style="left:662px;top:492px" width="17" height="17" viewBox="0 0 17 17"><path d="M4.7 3.2 L4.9 5.3 L2.8 7.9 L4.9 10.5 L4.7 12.8 L0 7.9 Z" fill="#c02a3a"/><path d="M11.2 3.2 L11 5.3 L13.1 7.9 L11 10.5 L11.2 12.8 L16 7.9 Z" fill="#c02a3a"/><rect x="7" y="0" width="1.9" height="4.8" rx="0.5" fill="#000"/><rect x="7" y="11.1" width="1.9" height="4.8" rx="0.5" fill="#000"/><circle cx="7.95" cy="7.95" r="1.9" fill="#111"/></svg>
<div class="t" style="left:684px;top:489px;height:23px;line-height:22px;">ether2</div>
<div class="t" style="left:810px;top:489px;height:23px;line-height:22px;">Ethernet</div>
<div class="t" style="left:987px;width:103px;text-align:right;top:489px;height:23px;line-height:22px;">1500</div>
<div class="t" style="left:1092px;width:73px;text-align:right;top:489px;height:23px;line-height:22px;">1596</div>
<div class="t" style="left:1167px;width:131px;text-align:right;top:489px;height:23px;line-height:22px;"></div>
<div style="left:593px;top:512px;width:707px;height:23px;background:#fff"></div>
<div style="left:593px;top:534px;width:707px;height:1px;background:#e3e3e3"></div>
<div style="left:657px;top:512px;width:1px;height:23px;background:#e3e3e3"></div>
<div style="left:807px;top:512px;width:1px;height:23px;background:#e3e3e3"></div>
<div style="left:987px;top:512px;width:1px;height:23px;background:#e3e3e3"></div>
<div style="left:1092px;top:512px;width:1px;height:23px;background:#e3e3e3"></div>
<div style="left:1167px;top:512px;width:1px;height:23px;background:#e3e3e3"></div>
<div style="left:1300px;top:512px;width:1px;height:23px;background:#e3e3e3"></div>
<div class="t" style="left:596px;top:512px;height:23px;line-height:22px;"></div>
<svg style="left:686px;top:515px" width="17" height="15" viewBox="0 0 17 15"><defs><linearGradient id="vg" x1="0" x2="0" y1="0" y2="1"><stop offset="0.1" stop-color="#22c0ff"/><stop offset="0.5" stop-color="#1c9ae8"/><stop offset="0.95" stop-color="#062c86"/></linearGradient></defs><path d="M5.7 2.0 L5.7 5.5 L3.4 7.9 L5.7 10.3 L5.7 13.8 L0 7.9 Z" fill="url(#vg)"/><path d="M10.3 2.0 L16 7.9 L10.3 13.8 L10.3 10.3 L12.6 7.9 L10.3 5.5 Z" fill="url(#vg)"/><path d="M5.4 7.9 H11.8" stroke="#0c8ee0" stroke-width="1.8"/><path d="M6.6 6.3 V9.5 M9.4 6.3 V9.5" stroke="#0a86d8" stroke-width="1.2" stroke-linecap="round"/></svg>
<div class="t" style="left:708px;top:512px;height:23px;line-height:22px;">vlan_eth2</div>
<div class="t" style="left:810px;top:512px;height:23px;line-height:22px;">VLAN</div>
<div class="t" style="left:987px;width:103px;text-align:right;top:512px;height:23px;line-height:22px;">1500</div>
<div class="t" style="left:1092px;width:73px;text-align:right;top:512px;height:23px;line-height:22px;">1592</div>
<div class="t" style="left:1167px;width:131px;text-align:right;top:512px;height:23px;line-height:22px;"></div>
<div style="left:593px;top:535px;width:707px;height:23px;background:#fff"></div>
<div style="left:593px;top:557px;width:707px;height:1px;background:#e3e3e3"></div>
<div style="left:657px;top:535px;width:1px;height:23px;background:#e3e3e3"></div>
<div style="left:807px;top:535px;width:1px;height:23px;background:#e3e3e3"></div>
<div style="left:987px;top:535px;width:1px;height:23px;background:#e3e3e3"></div>
<div style="left:1092px;top:535px;width:1px;height:23px;background:#e3e3e3"></div>
<div style="left:1167px;top:535px;width:1px;height:23px;background:#e3e3e3"></div>
<div style="left:1300px;top:535px;width:1px;height:23px;background:#e3e3e3"></div>
<div class="t" style="left:596px;top:535px;height:23px;line-height:22px;">RS</div>
<svg style="left:662px;top:538px" width="17" height="17" viewBox="0 0 17 17"><path d="M4.7 3.2 L4.9 5.3 L2.8 7.9 L4.9 10.5 L4.7 12.8 L0 7.9 Z" fill="#c02a3a"/><path d="M11.2 3.2 L11 5.3 L13.1 7.9 L11 10.5 L11.2 12.8 L16 7.9 Z" fill="#c02a3a"/><rect x="7" y="0" width="1.9" height="4.8" rx="0.5" fill="#000"/><rect x="7" y="11.1" width="1.9" height="4.8" rx="0.5" fill="#000"/><circle cx="7.95" cy="7.95" r="1.9" fill="#111"/></svg>
<div class="t" style="left:684px;top:535px;height:23px;line-height:22px;">ether3</div>
<div class="t" style="left:810px;top:535px;height:23px;line-height:22px;">Ethernet</div>
<div class="t" style="left:987px;width:103px;text-align:right;top:535px;height:23px;line-height:22px;">1500</div>
<div class="t" style="left:1092px;width:73px;text-align:right;top:535px;height:23px;line-height:22px;">1596</div>
<div class="t" style="left:1167px;width:131px;text-align:right;top:535px;height:23px;line-height:22px;"></div>
<div style="left:593px;top:558px;width:707px;height:23px;background:#fff"></div>
<div style="left:593px;top:580px;width:707px;height:1px;background:#e3e3e3"></div>
<div style="left:657px;top:558px;width:1px;height:23px;background:#e3e3e3"></div>
<div style="left:807px;top:558px;width:1px;height:23px;background:#e3e3e3"></div>
<div style="left:987px;top:558px;width:1px;height:23px;background:#e3e3e3"></div>
<div style="left:1092px;top:558px;width:1px;height:23px;background:#e3e3e3"></div>
<div style="left:1167px;top:558px;width:1px;height:23px;background:#e3e3e3"></div>
<div style="left:1300px;top:558px;width:1px;height:23px;background:#e3e3e3"></div>
<div class="t" style="left:596px;top:558px;height:23px;line-height:22px;">R</div>
<svg style="left:686px;top:561px" width="17" height="15" viewBox="0 0 17 15"><defs><linearGradient id="vg" x1="0" x2="0" y1="0" y2="1"><stop offset="0.1" stop-color="#22c0ff"/><stop offset="0.5" stop-color="#1c9ae8"/><stop offset="0.95" stop-color="#062c86"/></linearGradient></defs><path d="M5.7 2.0 L5.7 5.5 L3.4 7.9 L5.7 10.3 L5.7 13.8 L0 7.9 Z" fill="url(#vg)"/><path d="M10.3 2.0 L16 7.9 L10.3 13.8 L10.3 10.3 L12.6 7.9 L10.3 5.5 Z" fill="url(#vg)"/><path d="M5.4 7.9 H11.8" stroke="#0c8ee0" stroke-width="1.8"/><path d="M6.6 6.3 V9.5 M9.4 6.3 V9.5" stroke="#0a86d8" stroke-width="1.2" stroke-linecap="round"/></svg>
<div class="t" style="left:708px;top:558px;height:23px;line-height:22px;">vlan_eth3</div>
<div class="t" style="left:810px;top:558px;height:23px;line-height:22px;">VLAN</div>
<div class="t" style="left:987px;width:103px;text-align:right;top:558px;height:23px;line-height:22px;">1500</div>
<div class="t" style="left:1092px;width:73px;text-align:right;top:558px;height:23px;line-height:22px;">1592</div>
<div class="t" style="left:1167px;width:131px;text-align:right;top:558px;height:23px;line-height:22px;"></div>
<div style="left:593px;top:581px;width:707px;height:23px;background:#fff"></div>
<div style="left:593px;top:603px;width:707px;height:1px;background:#e3e3e3"></div>
<div style="left:657px;top:581px;width:1px;height:23px;background:#e3e3e3"></div>
<div style="left:807px;top:581px;width:1px;height:23px;background:#e3e3e3"></div>
<div style="left:987px;top:581px;width:1px;height:23px;background:#e3e3e3"></div>
<div style="left:1092px;top:581px;width:1px;height:23px;background:#e3e3e3"></div>
<div style="left:1167px;top:581px;width:1px;height:23px;background:#e3e3e3"></div>
<div style="left:1300px;top:581px;width:1px;height:23px;background:#e3e3e3"></div>
<div class="t" style="left:596px;top:581px;height:23px;line-height:22px;">S</div>
<svg style="left:662px;top:584px" width="17" height="17" viewBox="0 0 17 17"><path d="M4.7 3.2 L4.9 5.3 L2.8 7.9 L4.9 10.5 L4.7 12.8 L0 7.9 Z" fill="#c02a3a"/><path d="M11.2 3.2 L11 5.3 L13.1 7.9 L11 10.5 L11.2 12.8 L16 7.9 Z" fill="#c02a3a"/><rect x="7" y="0" width="1.9" height="4.8" rx="0.5" fill="#000"/><rect x="7" y="11.1" width="1.9" height="4.8" rx="0.5" fill="#000"/><circle cx="7.95" cy="7.95" r="1.9" fill="#111"/></svg>
<div class="t" style="left:684px;top:581px;height:23px;line-height:22px;">ether4</div>
<div class="t" style="left:810px;top:581px;height:23px;line-height:22px;">Ethernet</div>
<div class="t" style="left:987px;width:103px;text-align:right;top:581px;height:23px;line-height:22px;">1500</div>
<div class="t" style="left:1092px;width:73px;text-align:right;top:581px;height:23px;line-height:22px;">1596</div>
<div class="t" style="left:1167px;width:131px;text-align:right;top:581px;height:23px;line-height:22px;"></div>
<div style="left:593px;top:604px;width:707px;height:23px;background:#fff"></div>
<div style="left:593px;top:626px;width:707px;height:1px;background:#e3e3e3"></div>
<div style="left:657px;top:604px;width:1px;height:23px;background:#e3e3e3"></div>
<div style="left:807px;top:604px;width:1px;height:23px;background:#e3e3e3"></div>
<div style="left:987px;top:604px;width:1px;height:23px;background:#e3e3e3"></div>
<div style="left:1092px;top:604px;width:1px;height:23px;background:#e3e3e3"></div>
<div style="left:1167px;top:604px;width:1px;height:23px;background:#e3e3e3"></div>
<div style="left:1300px;top:604px;width:1px;height:23px;background:#e3e3e3"></div>
<div class="t" style="left:596px;top:604px;height:23px;line-height:22px;"></div>
<svg style="left:686px;top:607px" width="17" height="15" viewBox="0 0 17 15"><defs><linearGradient id="vg" x1="0" x2="0" y1="0" y2="1"><stop offset="0.1" stop-color="#22c0ff"/><stop offset="0.5" stop-color="#1c9ae8"/><stop offset="0.95" stop-color="#062c86"/></linearGradient></defs><path d="M5.7 2.0 L5.7 5.5 L3.4 7.9 L5.7 10.3 L5.7 13.8 L0 7.9 Z" fill="url(#vg)"/><path d="M10.3 2.0 L16 7.9 L10.3 13.8 L10.3 10.3 L12.6 7.9 L10.3 5.5 Z" fill="url(#vg)"/><path d="M5.4 7.9 H11.8" stroke="#0c8ee0" stroke-width="1.8"/><path d="M6.6 6.3 V9.5 M9.4 6.3 V9.5" stroke="#0a86d8" stroke-width="1.2" stroke-linecap="round"/></svg>
<div class="t" style="left:708px;top:604px;height:23px;line-height:22px;">vlan_eth4</div>
<div class="t" style="left:810px;top:604px;height:23px;line-height:22px;">VLAN</div>
<div class="t" style="left:987px;width:103px;text-align:right;top:604px;height:23px;line-height:22px;">1500</div>
<div class="t" style="left:1092px;width:73px;text-align:right;top:604px;height:23px;line-height:22px;">1592</div>
<div class="t" style="left:1167px;width:131px;text-align:right;top:604px;height:23px;line-height:22px;"></div>
<div style="left:593px;top:627px;width:707px;height:23px;background:#fff"></div>
<div style="left:593px;top:649px;width:707px;height:1px;background:#e3e3e3"></div>
<div style="left:657px;top:627px;width:1px;height:23px;background:#e3e3e3"></div>
<div style="left:807px;top:627px;width:1px;height:23px;background:#e3e3e3"></div>
<div style="left:987px;top:627px;width:1px;height:23px;background:#e3e3e3"></div>
<div style="left:1092px;top:627px;width:1px;height:23px;background:#e3e3e3"></div>
<div style="left:1167px;top:627px;width:1px;height:23px;background:#e3e3e3"></div>
<div style="left:1300px;top:627px;width:1px;height:23px;background:#e3e3e3"></div>
<div class="t" style="left:596px;top:627px;height:23px;line-height:22px;">RS</div>
<svg style="left:662px;top:630px" width="17" height="17" viewBox="0 0 17 17"><path d="M4.7 3.2 L4.9 5.3 L2.8 7.9 L4.9 10.5 L4.7 12.8 L0 7.9 Z" fill="#c02a3a"/><path d="M11.2 3.2 L11 5.3 L13.1 7.9 L11 10.5 L11.2 12.8 L16 7.9 Z" fill="#c02a3a"/><rect x="7" y="0" width="1.9" height="4.8" rx="0.5" fill="#000"/><rect x="7" y="11.1" width="1.9" height="4.8" rx="0.5" fill="#000"/><circle cx="7.95" cy="7.95" r="1.9" fill="#111"/></svg>
<div class="t" style="left:684px;top:627px;height:23px;line-height:22px;">ether5</div>
<div class="t" style="left:810px;top:627px;height:23px;line-height:22px;">Ethernet</div>
<div class="t" style="left:987px;width:103px;text-align:right;top:627px;height:23px;line-height:22px;">1500</div>
<div class="t" style="left:1092px;width:73px;text-align:right;top:627px;height:23px;line-height:22px;">1596</div>
<div class="t" style="left:1167px;width:131px;text-align:right;top:627px;height:23px;line-height:22px;"></div>
<div style="left:593px;top:650px;width:707px;height:23px;background:#fff"></div>
<div style="left:593px;top:672px;width:707px;height:1px;background:#e3e3e3"></div>
<div style="left:657px;top:650px;width:1px;height:23px;background:#e3e3e3"></div>
<div style="left:807px;top:650px;width:1px;height:23px;background:#e3e3e3"></div>
<div style="left:987px;top:650px;width:1px;height:23px;background:#e3e3e3"></div>
<div style="left:1092px;top:650px;width:1px;height:23px;background:#e3e3e3"></div>
<div style="left:1167px;top:650px;width:1px;height:23px;background:#e3e3e3"></div>
<div style="left:1300px;top:650px;width:1px;height:23px;background:#e3e3e3"></div>
<div class="t" style="left:596px;top:650px;height:23px;line-height:22px;">R</div>
<svg style="left:686px;top:653px" width="17" height="15" viewBox="0 0 17 15"><defs><linearGradient id="vg" x1="0" x2="0" y1="0" y2="1"><stop offset="0.1" stop-color="#22c0ff"/><stop offset="0.5" stop-color="#1c9ae8"/><stop offset="0.95" stop-color="#062c86"/></linearGradient></defs><path d="M5.7 2.0 L5.7 5.5 L3.4 7.9 L5.7 10.3 L5.7 13.8 L0 7.9 Z" fill="url(#vg)"/><path d="M10.3 2.0 L16 7.9 L10.3 13.8 L10.3 10.3 L12.6 7.9 L10.3 5.5 Z" fill="url(#vg)"/><path d="M5.4 7.9 H11.8" stroke="#0c8ee0" stroke-width="1.8"/><path d="M6.6 6.3 V9.5 M9.4 6.3 V9.5" stroke="#0a86d8" stroke-width="1.2" stroke-linecap="round"/></svg>
<div class="t" style="left:708px;top:650px;height:23px;line-height:22px;">vlan_eth5</div>
<div class="t" style="left:810px;top:650px;height:23px;line-height:22px;">VLAN</div>
<div class="t" style="left:987px;width:103px;text-align:right;top:650px;height:23px;line-height:22px;">1500</div>
<div class="t" style="left:1092px;width:73px;text-align:right;top:650px;height:23px;line-height:22px;">1592</div>
<div class="t" style="left:1167px;width:131px;text-align:right;top:650px;height:23px;line-height:22px;"></div>
<div style="left:594px;top:420px;width:596px;height:45px;border:1px dotted #707070;box-sizing:border-box;border-top:none"></div>
<div style="left:593px;top:393px;width:1px;height:300px;background:#a0a0a0"></div>
</div>
<div class="clip" style="clip-path:inset(557px 662px 639px 27px)">
<div style="left:26px;top:557px;width:600px;height:247px;background:#f0f0f0"></div>
<div style="left:26px;top:557px;width:600px;height:29px;background:#4f4fcc"></div>
<div style="left:26px;top:557px;width:600px;height:1px;background:#8686da"></div>
<div style="left:26px;top:585px;width:600px;height:1px;background:#4242c6"></div>
<div style="left:26px;top:586px;width:600px;height:1px;background:#f8f8ee"></div>
<div class="t" style="left:32px;top:559px;height:29px;line-height:29px;color:#fff">Interface List</div>
<div style="left:34px;top:592px;width:77px;height:31px;background:#d9d9d9;border-top:1px solid #f4f4f4;box-sizing:border-box"></div>
<div style="left:110px;top:592px;width:1px;height:31px;background:#a0a0a0"></div>
<div style="left:111px;top:592px;width:1px;height:31px;background:#fafafa"></div>
<div class="t" style="left:34px;top:592px;width:77px;height:31px;line-height:34px;text-align:center">Interface</div>
<div style="left:111px;top:588px;width:113px;height:35px;background:#f0f0f0;border-left:1px solid #fff;border-top:1px solid #fff;box-sizing:border-box"></div>
<div style="left:223px;top:588px;width:1px;height:35px;background:#a0a0a0"></div>
<div class="t" style="left:111px;top:588px;width:113px;height:35px;line-height:37px;text-align:center">Interface List</div>
<div style="left:224px;top:592px;width:76px;height:31px;background:#d9d9d9;border-top:1px solid #f4f4f4;box-sizing:border-box"></div>
<div style="left:299px;top:592px;width:1px;height:31px;background:#a0a0a0"></div>
<div style="left:300px;top:592px;width:1px;height:31px;background:#fafafa"></div>
<div class="t" style="left:224px;top:592px;width:76px;height:31px;line-height:34px;text-align:center">Ethernet</div>
<div style="left:301px;top:592px;width:101px;height:31px;background:#d9d9d9;border-top:1px solid #f4f4f4;box-sizing:border-box"></div>
<div style="left:401px;top:592px;width:1px;height:31px;background:#a0a0a0"></div>
<div style="left:402px;top:592px;width:1px;height:31px;background:#fafafa"></div>
<div class="t" style="left:301px;top:592px;width:101px;height:31px;line-height:34px;text-align:center">EoIP Tunnel</div>
<div style="left:403px;top:592px;width:83px;height:31px;background:#d9d9d9;border-top:1px solid #f4f4f4;box-sizing:border-box"></div>
<div style="left:485px;top:592px;width:1px;height:31px;background:#a0a0a0"></div>
<div style="left:486px;top:592px;width:1px;height:31px;background:#fafafa"></div>
<div class="t" style="left:403px;top:592px;width:83px;height:31px;line-height:34px;text-align:center">IP Tunnel</div>
<div style="left:487px;top:592px;width:103px;height:31px;background:#d9d9d9;border-top:1px solid #f4f4f4;box-sizing:border-box"></div>
<div style="left:589px;top:592px;width:1px;height:31px;background:#a0a0a0"></div>
<div style="left:590px;top:592px;width:1px;height:31px;background:#fafafa"></div>
<div class="t" style="left:487px;top:592px;width:103px;height:31px;line-height:34px;text-align:center">GRE Tunnel</div>
<div style="left:29px;top:623px;width:500px;height:1px;background:#fff"></div>
<div style="left:29px;top:623px;width:1px;height:190px;background:#fff"></div>
<div style="left:31px;top:627px;width:31px;height:32px;border:1px solid #a0a0a0;box-sizing:border-box;background:#f0f0f0;box-shadow:inset 1px 1px 0 #fff, 1px 1px 0 #fff"></div>
<svg style="left:38px;top:635px" width="15" height="15" viewBox="0 0 15 15"><path d="M5.5 0.5h4v5h5v4h-5v5h-4v-5h-5v-4h5z" fill="#0000ff" stroke="#000" stroke-width="1"/></svg>
<div style="left:65px;top:627px;width:31px;height:32px;border:1px solid #a0a0a0;box-sizing:border-box;background:#f0f0f0;box-shadow:inset 1px 1px 0 #fff, 1px 1px 0 #fff"></div>
<svg style="left:72px;top:640px" width="17" height="6" viewBox="0 0 17 6"><rect x="1.5" y="1.5" width="15" height="4" fill="#fff" stroke="none"/><rect x="0.5" y="0.5" width="15" height="4" fill="#f4f4f4" stroke="#a0a0a0"/></svg>
<div style="left:105px;top:627px;width:31px;height:32px;border:1px solid #a0a0a0;box-sizing:border-box;background:#f0f0f0;box-shadow:inset 1px 1px 0 #fff, 1px 1px 0 #fff"></div>
<svg style="left:105px;top:627px" width="31" height="32" viewBox="0 0 31 32"><path d="M6.4 16.5 L9.5 13.1 L12.5 16.4 L19.9 9.2 L22.8 12.1 L12.5 22.5 Z" fill="#f6f6f6" stroke="#9a9a9a" stroke-width="1" stroke-linejoin="round"/></svg>
<div style="left:139px;top:627px;width:31px;height:32px;border:1px solid #a0a0a0;box-sizing:border-box;background:#f0f0f0;box-shadow:inset 1px 1px 0 #fff, 1px 1px 0 #fff"></div>
<svg style="left:139px;top:627px" width="31" height="32" viewBox="0 0 31 32"><path d="M6.3 11.4 L8.9 9.2 L13.9 13.6 L18.9 9.2 L21.6 11.4 L16.3 16.4 L21.6 21.4 L18.9 23.5 L13.9 19.2 L8.9 23.5 L6.3 21.4 L11.5 16.4 Z" fill="#f6f6f6" stroke="#9a9a9a" stroke-width="1" stroke-linejoin="round"/></svg>
<div style="left:179px;top:627px;width:31px;height:32px;border:1px solid #a0a0a0;box-sizing:border-box;background:#f0f0f0;box-shadow:inset 1px 1px 0 #fff, 1px 1px 0 #fff"></div>
<svg style="left:179px;top:627px" width="31" height="32" viewBox="0 0 31 32"><path d="M5.5 13.5 L9.5 9.5 H22.5 V22.5 H5.5 Z" fill="#f8f8f8" stroke="#9a9a9a" stroke-width="1.1"/><path d="M5.5 13.5 H9.5 V9.5" fill="#fff" stroke="#9a9a9a" stroke-width="1"/><path d="M13 12.5h2M16 12.5h3M8 15.5h4M13 15.5h3M18 15.5h3" stroke="#9a9a9a" stroke-width="1"/></svg>
<div style="left:219px;top:627px;width:31px;height:32px;border:1px solid #a0a0a0;box-sizing:border-box;background:#f0f0f0;box-shadow:inset 1px 1px 0 #fff, 1px 1px 0 #fff"></div>
<svg style="left:219px;top:627px" width="31" height="32" viewBox="0 0 31 32"><defs><linearGradient id="fg" x1="0" x2="1" y1="0" y2="0"><stop offset="0" stop-color="#f4f6ff"/><stop offset="0.35" stop-color="#c8d2f8"/><stop offset="0.45" stop-color="#8c9de0"/><stop offset="1" stop-color="#6a7cc8"/></linearGradient><linearGradient id="fs" x1="0" x2="1" y1="0" y2="0"><stop offset="0" stop-color="#d0dcff"/><stop offset="1" stop-color="#98a8e8"/></linearGradient></defs><path d="M6.5 8 H22.5 L16.6 14.4 V24.3 H12.4 V14.4 Z" fill="url(#fg)" stroke="#000" stroke-width="1.1" stroke-linejoin="round"/><rect x="13" y="14.5" width="3" height="9.3" fill="url(#fs)"/><path d="M6.3 7.6 H22.7" stroke="#000" stroke-width="1.6"/></svg>
<div style="left:259px;top:627px;width:56px;height:32px;border:1px solid #a0a0a0;box-sizing:border-box;background:#f0f0f0;box-shadow:inset 1px 1px 0 #fff, 1px 1px 0 #fff"></div>
<div class="t" style="left:259px;top:628px;width:56px;height:32px;line-height:32px;text-align:center">Lists</div>
<div style="left:31px;top:662px;width:500px;height:150px;background:#fff"></div>
<div style="left:31px;top:662px;width:569px;height:27px;background:#f0f0f0;border-top:1px solid #a0a0a0;border-left:1px solid #a0a0a0;border-bottom:1px solid #a0a0a0;box-sizing:border-box"></div>
<div style="left:62px;top:662px;width:1px;height:27px;background:#a0a0a0"></div>
<div style="left:32px;top:663px;width:30px;height:1px;background:#fff"></div>
<div style="left:287px;top:662px;width:1px;height:27px;background:#a0a0a0"></div>
<div style="left:63px;top:663px;width:224px;height:1px;background:#fff"></div>
<div class="t" style="left:65px;top:663px;height:26px;line-height:27px">List</div>
<div style="left:512px;top:662px;width:1px;height:27px;background:#a0a0a0"></div>
<div style="left:288px;top:663px;width:224px;height:1px;background:#fff"></div>
<div class="t" style="left:290px;top:663px;height:26px;line-height:27px">Interface</div>
<div style="left:600px;top:662px;width:1px;height:27px;background:#a0a0a0"></div>
<div style="left:513px;top:663px;width:87px;height:1px;background:#fff"></div>
<svg style="left:271px;top:669px" width="12" height="12" viewBox="0 0 12 12"><path d="M6 0.5 L11.5 10.5 H0.5" fill="none" stroke="#fff" stroke-width="1.2"/><rect x="5" y="1" width="1" height="1" fill="#8a8a8a"/><rect x="5" y="2" width="1" height="1" fill="#c8c8c8"/><rect x="4" y="3" width="1" height="1" fill="#8a8a8a"/><rect x="4" y="4" width="1" height="1" fill="#c8c8c8"/><rect x="3" y="5" width="1" height="1" fill="#8a8a8a"/><rect x="3" y="6" width="1" height="1" fill="#c8c8c8"/><rect x="2" y="7" width="1" height="1" fill="#8a8a8a"/><rect x="2" y="8" width="1" height="1" fill="#c8c8c8"/><rect x="1" y="9" width="1" height="1" fill="#8a8a8a"/><rect x="1" y="10" width="1" height="1" fill="#c8c8c8"/><rect x="0" y="11" width="1" height="1" fill="#8a8a8a"/><rect x="0" y="12" width="1" height="1" fill="#c8c8c8"/></svg>
<div style="left:31px;top:689px;width:569px;height:23px;background:#fff"></div>
<div style="left:31px;top:711px;width:569px;height:1px;background:#e3e3e3"></div>
<div class="t" style="left:56px;top:689px;height:23px;line-height:22px">;;; defconf</div>
<div style="left:31px;top:712px;width:569px;height:23px;background:#fff"></div>
<div style="left:31px;top:734px;width:569px;height:1px;background:#e3e3e3"></div>
<div style="left:62px;top:712px;width:1px;height:23px;background:#e3e3e3"></div>
<div style="left:287px;top:712px;width:1px;height:23px;background:#e3e3e3"></div>
<div style="left:512px;top:712px;width:1px;height:23px;background:#e3e3e3"></div>
<div style="left:600px;top:712px;width:1px;height:23px;background:#e3e3e3"></div>
<div class="t" style="left:34px;top:712px;height:23px;line-height:22px;"></div>
<div class="t" style="left:65px;top:712px;height:23px;line-height:22px;">LAN</div>
<div class="t" style="left:290px;top:712px;height:23px;line-height:22px;">bridge</div>
<div class="t" style="left:515px;top:712px;height:23px;line-height:22px;"></div>
<div style="left:31px;top:735px;width:569px;height:23px;background:#fff"></div>
<div style="left:31px;top:757px;width:569px;height:1px;background:#e3e3e3"></div>
<div class="t" style="left:56px;top:735px;height:23px;line-height:22px">;;; defconf</div>
<div style="left:31px;top:758px;width:569px;height:23px;background:#fff"></div>
<div style="left:31px;top:780px;width:569px;height:1px;background:#e3e3e3"></div>
<div style="left:62px;top:758px;width:1px;height:23px;background:#e3e3e3"></div>
<div style="left:287px;top:758px;width:1px;height:23px;background:#e3e3e3"></div>
<div style="left:512px;top:758px;width:1px;height:23px;background:#e3e3e3"></div>
<div style="left:600px;top:758px;width:1px;height:23px;background:#e3e3e3"></div>
<div class="t" style="left:34px;top:758px;height:23px;line-height:22px;"></div>
<div class="t" style="left:65px;top:758px;height:23px;line-height:22px;">WAN</div>
<div class="t" style="left:290px;top:758px;height:23px;line-height:22px;">ether1</div>
<div class="t" style="left:515px;top:758px;height:23px;line-height:22px;"></div>
<div style="left:32px;top:689px;width:498px;height:45px;border:1px dotted #707070;box-sizing:border-box;border-top:none"></div>
<div style="left:31px;top:662px;width:1px;height:150px;background:#a0a0a0"></div>
</div>
<div class="clip" style="clip-path:inset(831px 110px 351px 47px)">
<div style="left:47px;top:831px;width:1029px;height:261px;background:#f0f0f0"></div>
<div style="left:47px;top:831px;width:1029px;height:29px;background:#4f4fcc"></div>
<div style="left:47px;top:831px;width:1029px;height:1px;background:#8686da"></div>
<div style="left:47px;top:859px;width:1029px;height:1px;background:#4242c6"></div>
<div style="left:47px;top:860px;width:1029px;height:1px;background:#f8f8ee"></div>
<div class="t" style="left:53px;top:833px;height:29px;line-height:29px;color:#fff">Interface List</div>
<div style="left:47px;top:831px;width:1px;height:261px;background:#000"></div>
<div style="left:55px;top:866px;width:79px;height:31px;background:#d9d9d9;border-top:1px solid #f4f4f4;box-sizing:border-box"></div>
<div style="left:133px;top:866px;width:1px;height:31px;background:#a0a0a0"></div>
<div style="left:134px;top:866px;width:1px;height:31px;background:#fafafa"></div>
<div class="t" style="left:55px;top:866px;width:79px;height:31px;line-height:34px;text-align:center">Interface</div>
<div style="left:134px;top:866px;width:107px;height:31px;background:#d9d9d9;border-top:1px solid #f4f4f4;box-sizing:border-box"></div>
<div style="left:240px;top:866px;width:1px;height:31px;background:#a0a0a0"></div>
<div style="left:241px;top:866px;width:1px;height:31px;background:#fafafa"></div>
<div class="t" style="left:134px;top:866px;width:107px;height:31px;line-height:34px;text-align:center">Interface List</div>
<div style="left:241px;top:862px;width:82px;height:35px;background:#f0f0f0;border-left:1px solid #fff;border-top:1px solid #fff;box-sizing:border-box"></div>
<div style="left:322px;top:862px;width:1px;height:35px;background:#a0a0a0"></div>
<div class="t" style="left:241px;top:862px;width:82px;height:35px;line-height:37px;text-align:center">Ethernet</div>
<div style="left:323px;top:866px;width:101px;height:31px;background:#d9d9d9;border-top:1px solid #f4f4f4;box-sizing:border-box"></div>
<div style="left:423px;top:866px;width:1px;height:31px;background:#a0a0a0"></div>
<div style="left:424px;top:866px;width:1px;height:31px;background:#fafafa"></div>
<div class="t" style="left:323px;top:866px;width:101px;height:31px;line-height:34px;text-align:center">EoIP Tunnel</div>
<div style="left:424px;top:866px;width:83px;height:31px;background:#d9d9d9;border-top:1px solid #f4f4f4;box-sizing:border-box"></div>
<div style="left:506px;top:866px;width:1px;height:31px;background:#a0a0a0"></div>
<div style="left:507px;top:866px;width:1px;height:31px;background:#fafafa"></div>
<div class="t" style="left:424px;top:866px;width:83px;height:31px;line-height:34px;text-align:center">IP Tunnel</div>
<div style="left:507px;top:866px;width:104px;height:31px;background:#d9d9d9;border-top:1px solid #f4f4f4;box-sizing:border-box"></div>
<div style="left:610px;top:866px;width:1px;height:31px;background:#a0a0a0"></div>
<div style="left:611px;top:866px;width:1px;height:31px;background:#fafafa"></div>
<div class="t" style="left:507px;top:866px;width:104px;height:31px;line-height:34px;text-align:center">GRE Tunnel</div>
<div style="left:611px;top:866px;width:58px;height:31px;background:#d9d9d9;border-top:1px solid #f4f4f4;box-sizing:border-box"></div>
<div style="left:668px;top:866px;width:1px;height:31px;background:#a0a0a0"></div>
<div style="left:669px;top:866px;width:1px;height:31px;background:#fafafa"></div>
<div class="t" style="left:611px;top:866px;width:58px;height:31px;line-height:34px;text-align:center">VLAN</div>
<div style="left:669px;top:866px;width:61px;height:31px;background:#d9d9d9;border-top:1px solid #f4f4f4;box-sizing:border-box"></div>
<div style="left:729px;top:866px;width:1px;height:31px;background:#a0a0a0"></div>
<div style="left:730px;top:866px;width:1px;height:31px;background:#fafafa"></div>
<div class="t" style="left:669px;top:866px;width:61px;height:31px;line-height:34px;text-align:center">VRRP</div>
<div style="left:730px;top:866px;width:75px;height:31px;background:#d9d9d9;border-top:1px solid #f4f4f4;box-sizing:border-box"></div>
<div style="left:804px;top:866px;width:1px;height:31px;background:#a0a0a0"></div>
<div style="left:805px;top:866px;width:1px;height:31px;background:#fafafa"></div>
<div class="t" style="left:730px;top:866px;width:75px;height:31px;line-height:34px;text-align:center">Bonding</div>
<div style="left:805px;top:866px;width:45px;height:31px;background:#d9d9d9;border-top:1px solid #f4f4f4;box-sizing:border-box"></div>
<div style="left:849px;top:866px;width:1px;height:31px;background:#a0a0a0"></div>
<div style="left:850px;top:866px;width:1px;height:31px;background:#fafafa"></div>
<div class="t" style="left:805px;top:866px;width:45px;height:31px;line-height:34px;text-align:center">LTE</div>
<div style="left:50px;top:897px;width:1030px;height:1px;background:#fff"></div>
<div style="left:50px;top:897px;width:1px;height:200px;background:#fff"></div>
<div style="left:52px;top:901px;width:31px;height:32px;border:1px solid #a0a0a0;box-sizing:border-box;background:#f0f0f0;box-shadow:inset 1px 1px 0 #fff, 1px 1px 0 #fff"></div>
<svg style="left:52px;top:901px" width="31" height="32" viewBox="0 0 31 32"><path d="M6.4 16.5 L9.5 13.1 L12.5 16.4 L19.9 9.2 L22.8 12.1 L12.5 22.5 Z" fill="#f6f6f6" stroke="#9a9a9a" stroke-width="1" stroke-linejoin="round"/></svg>
<div style="left:86px;top:901px;width:31px;height:32px;border:1px solid #a0a0a0;box-sizing:border-box;background:#f0f0f0;box-shadow:inset 1px 1px 0 #fff, 1px 1px 0 #fff"></div>
<svg style="left:86px;top:901px" width="31" height="32" viewBox="0 0 31 32"><path d="M6.3 11.4 L8.9 9.2 L13.9 13.6 L18.9 9.2 L21.6 11.4 L16.3 16.4 L21.6 21.4 L18.9 23.5 L13.9 19.2 L8.9 23.5 L6.3 21.4 L11.5 16.4 Z" fill="#f6f6f6" stroke="#9a9a9a" stroke-width="1" stroke-linejoin="round"/></svg>
<div style="left:126px;top:901px;width:31px;height:32px;border:1px solid #a0a0a0;box-sizing:border-box;background:#f0f0f0;box-shadow:inset 1px 1px 0 #fff, 1px 1px 0 #fff"></div>
<svg style="left:126px;top:901px" width="31" height="32" viewBox="0 0 31 32"><path d="M5.5 13.5 L9.5 9.5 H22.5 V22.5 H5.5 Z" fill="#f8f8f8" stroke="#9a9a9a" stroke-width="1.1"/><path d="M5.5 13.5 H9.5 V9.5" fill="#fff" stroke="#9a9a9a" stroke-width="1"/><path d="M13 12.5h2M16 12.5h3M8 15.5h4M13 15.5h3M18 15.5h3" stroke="#9a9a9a" stroke-width="1"/></svg>
<div style="left:166px;top:901px;width:31px;height:32px;border:1px solid #a0a0a0;box-sizing:border-box;background:#f0f0f0;box-shadow:inset 1px 1px 0 #fff, 1px 1px 0 #fff"></div>
<svg style="left:166px;top:901px" width="31" height="32" viewBox="0 0 31 32"><defs><linearGradient id="fg" x1="0" x2="1" y1="0" y2="0"><stop offset="0" stop-color="#f4f6ff"/><stop offset="0.35" stop-color="#c8d2f8"/><stop offset="0.45" stop-color="#8c9de0"/><stop offset="1" stop-color="#6a7cc8"/></linearGradient><linearGradient id="fs" x1="0" x2="1" y1="0" y2="0"><stop offset="0" stop-color="#d0dcff"/><stop offset="1" stop-color="#98a8e8"/></linearGradient></defs><path d="M6.5 8 H22.5 L16.6 14.4 V24.3 H12.4 V14.4 Z" fill="url(#fg)" stroke="#000" stroke-width="1.1" stroke-linejoin="round"/><rect x="13" y="14.5" width="3" height="9.3" fill="url(#fs)"/><path d="M6.3 7.6 H22.7" stroke="#000" stroke-width="1.6"/></svg>
<div style="left:206px;top:901px;width:110px;height:32px;border:1px solid #a0a0a0;box-sizing:border-box;background:#f0f0f0;box-shadow:inset 1px 1px 0 #fff, 1px 1px 0 #fff"></div>
<div class="t" style="left:206px;top:902px;width:110px;height:32px;line-height:32px;text-align:center">Power Cycle</div>
<div style="left:52px;top:936px;width:1030px;height:160px;background:#fff"></div>
<div style="left:52px;top:936px;width:1148px;height:27px;background:#f0f0f0;border-top:1px solid #a0a0a0;border-left:1px solid #a0a0a0;border-bottom:1px solid #a0a0a0;box-sizing:border-box"></div>
<div style="left:116px;top:936px;width:1px;height:27px;background:#a0a0a0"></div>
<div style="left:53px;top:937px;width:63px;height:1px;background:#fff"></div>
<div style="left:266px;top:936px;width:1px;height:27px;background:#a0a0a0"></div>
<div style="left:117px;top:937px;width:149px;height:1px;background:#fff"></div>
<div class="t" style="left:119px;top:937px;height:26px;line-height:27px">Name</div>
<div style="left:446px;top:936px;width:1px;height:27px;background:#a0a0a0"></div>
<div style="left:267px;top:937px;width:179px;height:1px;background:#fff"></div>
<div class="t" style="left:269px;top:937px;height:26px;line-height:27px">Type</div>
<div style="left:521px;top:936px;width:1px;height:27px;background:#a0a0a0"></div>
<div style="left:447px;top:937px;width:74px;height:1px;background:#fff"></div>
<div class="t" style="left:449px;top:937px;height:26px;line-height:27px">MTU</div>
<div style="left:626px;top:936px;width:1px;height:27px;background:#a0a0a0"></div>
<div style="left:522px;top:937px;width:104px;height:1px;background:#fff"></div>
<div class="t" style="left:524px;top:937px;height:26px;line-height:27px">Actual MTU</div>
<div style="left:701px;top:936px;width:1px;height:27px;background:#a0a0a0"></div>
<div style="left:627px;top:937px;width:74px;height:1px;background:#fff"></div>
<div class="t" style="left:629px;top:937px;height:26px;line-height:27px">L2 MTU</div>
<div style="left:881px;top:936px;width:1px;height:27px;background:#a0a0a0"></div>
<div style="left:702px;top:937px;width:179px;height:1px;background:#fff"></div>
<div class="t" style="left:704px;top:937px;height:26px;line-height:27px">Tx</div>
<div style="left:1061px;top:936px;width:1px;height:27px;background:#a0a0a0"></div>
<div style="left:882px;top:937px;width:179px;height:1px;background:#fff"></div>
<div class="t" style="left:884px;top:937px;height:26px;line-height:27px">Rx</div>
<div style="left:1200px;top:936px;width:1px;height:27px;background:#a0a0a0"></div>
<div style="left:1062px;top:937px;width:138px;height:1px;background:#fff"></div>
<div class="t" style="left:1064px;top:937px;height:26px;line-height:27px">Tx</div>
<svg style="left:250px;top:943px" width="12" height="12" viewBox="0 0 12 12"><path d="M6 0.5 L11.5 10.5 H0.5" fill="none" stroke="#fff" stroke-width="1.2"/><rect x="5" y="1" width="1" height="1" fill="#8a8a8a"/><rect x="5" y="2" width="1" height="1" fill="#c8c8c8"/><rect x="4" y="3" width="1" height="1" fill="#8a8a8a"/><rect x="4" y="4" width="1" height="1" fill="#c8c8c8"/><rect x="3" y="5" width="1" height="1" fill="#8a8a8a"/><rect x="3" y="6" width="1" height="1" fill="#c8c8c8"/><rect x="2" y="7" width="1" height="1" fill="#8a8a8a"/><rect x="2" y="8" width="1" height="1" fill="#c8c8c8"/><rect x="1" y="9" width="1" height="1" fill="#8a8a8a"/><rect x="1" y="10" width="1" height="1" fill="#c8c8c8"/><rect x="0" y="11" width="1" height="1" fill="#8a8a8a"/><rect x="0" y="12" width="1" height="1" fill="#c8c8c8"/></svg>
<div style="left:52px;top:963px;width:1148px;height:23px;background:#fff"></div>
<div style="left:52px;top:985px;width:1148px;height:1px;background:#e3e3e3"></div>
<div style="left:116px;top:963px;width:1px;height:23px;background:#e3e3e3"></div>
<div style="left:266px;top:963px;width:1px;height:23px;background:#e3e3e3"></div>
<div style="left:446px;top:963px;width:1px;height:23px;background:#e3e3e3"></div>
<div style="left:521px;top:963px;width:1px;height:23px;background:#e3e3e3"></div>
<div style="left:626px;top:963px;width:1px;height:23px;background:#e3e3e3"></div>
<div style="left:701px;top:963px;width:1px;height:23px;background:#e3e3e3"></div>
<div style="left:881px;top:963px;width:1px;height:23px;background:#e3e3e3"></div>
<div style="left:1061px;top:963px;width:1px;height:23px;background:#e3e3e3"></div>
<div style="left:1200px;top:963px;width:1px;height:23px;background:#e3e3e3"></div>
<div class="t" style="left:55px;top:963px;height:23px;line-height:22px;">R</div>
<svg style="left:121px;top:966px" width="17" height="17" viewBox="0 0 17 17"><path d="M4.7 3.2 L4.9 5.3 L2.8 7.9 L4.9 10.5 L4.7 12.8 L0 7.9 Z" fill="#c02a3a"/><path d="M11.2 3.2 L11 5.3 L13.1 7.9 L11 10.5 L11.2 12.8 L16 7.9 Z" fill="#c02a3a"/><rect x="7" y="0" width="1.9" height="4.8" rx="0.5" fill="#000"/><rect x="7" y="11.1" width="1.9" height="4.8" rx="0.5" fill="#000"/><circle cx="7.95" cy="7.95" r="1.9" fill="#111"/></svg>
<div class="t" style="left:143px;top:963px;height:23px;line-height:22px;">ether1</div>
<div class="t" style="left:269px;top:963px;height:23px;line-height:22px;">Ethernet</div>
<div class="t" style="left:446px;width:73px;text-align:right;top:963px;height:23px;line-height:22px;">1500</div>
<div class="t" style="left:521px;width:103px;text-align:right;top:963px;height:23px;line-height:22px;">1500</div>
<div class="t" style="left:626px;width:73px;text-align:right;top:963px;height:23px;line-height:22px;">1596</div>
<div class="t" style="left:701px;width:178px;text-align:right;top:963px;height:23px;line-height:22px;">512 bps</div>
<div class="t" style="left:881px;width:178px;text-align:right;top:963px;height:23px;line-height:22px;">2.2 kbps</div>
<div class="t" style="left:1061px;width:137px;text-align:right;top:963px;height:23px;line-height:22px;"></div>
<div style="left:52px;top:986px;width:1148px;height:23px;background:#fff"></div>
<div style="left:52px;top:1008px;width:1148px;height:1px;background:#e3e3e3"></div>
<div style="left:116px;top:986px;width:1px;height:23px;background:#e3e3e3"></div>
<div style="left:266px;top:986px;width:1px;height:23px;background:#e3e3e3"></div>
<div style="left:446px;top:986px;width:1px;height:23px;background:#e3e3e3"></div>
<div style="left:521px;top:986px;width:1px;height:23px;background:#e3e3e3"></div>
<div style="left:626px;top:986px;width:1px;height:23px;background:#e3e3e3"></div>
<div style="left:701px;top:986px;width:1px;height:23px;background:#e3e3e3"></div>
<div style="left:881px;top:986px;width:1px;height:23px;background:#e3e3e3"></div>
<div style="left:1061px;top:986px;width:1px;height:23px;background:#e3e3e3"></div>
<div style="left:1200px;top:986px;width:1px;height:23px;background:#e3e3e3"></div>
<div class="t" style="left:55px;top:986px;height:23px;line-height:22px;">S</div>
<svg style="left:121px;top:989px" width="17" height="17" viewBox="0 0 17 17"><path d="M4.7 3.2 L4.9 5.3 L2.8 7.9 L4.9 10.5 L4.7 12.8 L0 7.9 Z" fill="#c02a3a"/><path d="M11.2 3.2 L11 5.3 L13.1 7.9 L11 10.5 L11.2 12.8 L16 7.9 Z" fill="#c02a3a"/><rect x="7" y="0" width="1.9" height="4.8" rx="0.5" fill="#000"/><rect x="7" y="11.1" width="1.9" height="4.8" rx="0.5" fill="#000"/><circle cx="7.95" cy="7.95" r="1.9" fill="#111"/></svg>
<div class="t" style="left:143px;top:986px;height:23px;line-height:22px;">ether2</div>
<div class="t" style="left:269px;top:986px;height:23px;line-height:22px;">Ethernet</div>
<div class="t" style="left:446px;width:73px;text-align:right;top:986px;height:23px;line-height:22px;">1500</div>
<div class="t" style="left:521px;width:103px;text-align:right;top:986px;height:23px;line-height:22px;">1500</div>
<div class="t" style="left:626px;width:73px;text-align:right;top:986px;height:23px;line-height:22px;">1596</div>
<div class="t" style="left:701px;width:178px;text-align:right;top:986px;height:23px;line-height:22px;">0 bps</div>
<div class="t" style="left:881px;width:178px;text-align:right;top:986px;height:23px;line-height:22px;">0 bps</div>
<div class="t" style="left:1061px;width:137px;text-align:right;top:986px;height:23px;line-height:22px;"></div>
<div style="left:52px;top:1009px;width:1148px;height:23px;background:#fff"></div>
<div style="left:52px;top:1031px;width:1148px;height:1px;background:#e3e3e3"></div>
<div style="left:116px;top:1009px;width:1px;height:23px;background:#e3e3e3"></div>
<div style="left:266px;top:1009px;width:1px;height:23px;background:#e3e3e3"></div>
<div style="left:446px;top:1009px;width:1px;height:23px;background:#e3e3e3"></div>
<div style="left:521px;top:1009px;width:1px;height:23px;background:#e3e3e3"></div>
<div style="left:626px;top:1009px;width:1px;height:23px;background:#e3e3e3"></div>
<div style="left:701px;top:1009px;width:1px;height:23px;background:#e3e3e3"></div>
<div style="left:881px;top:1009px;width:1px;height:23px;background:#e3e3e3"></div>
<div style="left:1061px;top:1009px;width:1px;height:23px;background:#e3e3e3"></div>
<div style="left:1200px;top:1009px;width:1px;height:23px;background:#e3e3e3"></div>
<div class="t" style="left:55px;top:1009px;height:23px;line-height:22px;">RS</div>
<svg style="left:121px;top:1012px" width="17" height="17" viewBox="0 0 17 17"><path d="M4.7 3.2 L4.9 5.3 L2.8 7.9 L4.9 10.5 L4.7 12.8 L0 7.9 Z" fill="#c02a3a"/><path d="M11.2 3.2 L11 5.3 L13.1 7.9 L11 10.5 L11.2 12.8 L16 7.9 Z" fill="#c02a3a"/><rect x="7" y="0" width="1.9" height="4.8" rx="0.5" fill="#000"/><rect x="7" y="11.1" width="1.9" height="4.8" rx="0.5" fill="#000"/><circle cx="7.95" cy="7.95" r="1.9" fill="#111"/></svg>
<div class="t" style="left:143px;top:1009px;height:23px;line-height:22px;">ether3</div>
<div class="t" style="left:269px;top:1009px;height:23px;line-height:22px;">Ethernet</div>
<div class="t" style="left:446px;width:73px;text-align:right;top:1009px;height:23px;line-height:22px;">1500</div>
<div class="t" style="left:521px;width:103px;text-align:right;top:1009px;height:23px;line-height:22px;">1500</div>
<div class="t" style="left:626px;width:73px;text-align:right;top:1009px;height:23px;line-height:22px;">1596</div>
<div class="t" style="left:701px;width:178px;text-align:right;top:1009px;height:23px;line-height:22px;">0 bps</div>
<div class="t" style="left:881px;width:178px;text-align:right;top:1009px;height:23px;line-height:22px;">0 bps</div>
<div class="t" style="left:1061px;width:137px;text-align:right;top:1009px;height:23px;line-height:22px;"></div>
<div style="left:52px;top:1032px;width:1148px;height:23px;background:#fff"></div>
<div style="left:52px;top:1054px;width:1148px;height:1px;background:#e3e3e3"></div>
<div style="left:116px;top:1032px;width:1px;height:23px;background:#e3e3e3"></div>
<div style="left:266px;top:1032px;width:1px;height:23px;background:#e3e3e3"></div>
<div style="left:446px;top:1032px;width:1px;height:23px;background:#e3e3e3"></div>
<div style="left:521px;top:1032px;width:1px;height:23px;background:#e3e3e3"></div>
<div style="left:626px;top:1032px;width:1px;height:23px;background:#e3e3e3"></div>
<div style="left:701px;top:1032px;width:1px;height:23px;background:#e3e3e3"></div>
<div style="left:881px;top:1032px;width:1px;height:23px;background:#e3e3e3"></div>
<div style="left:1061px;top:1032px;width:1px;height:23px;background:#e3e3e3"></div>
<div style="left:1200px;top:1032px;width:1px;height:23px;background:#e3e3e3"></div>
<div class="t" style="left:55px;top:1032px;height:23px;line-height:22px;">S</div>
<svg style="left:121px;top:1035px" width="17" height="17" viewBox="0 0 17 17"><path d="M4.7 3.2 L4.9 5.3 L2.8 7.9 L4.9 10.5 L4.7 12.8 L0 7.9 Z" fill="#c02a3a"/><path d="M11.2 3.2 L11 5.3 L13.1 7.9 L11 10.5 L11.2 12.8 L16 7.9 Z" fill="#c02a3a"/><rect x="7" y="0" width="1.9" height="4.8" rx="0.5" fill="#000"/><rect x="7" y="11.1" width="1.9" height="4.8" rx="0.5" fill="#000"/><circle cx="7.95" cy="7.95" r="1.9" fill="#111"/></svg>
<div class="t" style="left:143px;top:1032px;height:23px;line-height:22px;">ether4</div>
<div class="t" style="left:269px;top:1032px;height:23px;line-height:22px;">Ethernet</div>
<div class="t" style="left:446px;width:73px;text-align:right;top:1032px;height:23px;line-height:22px;">1500</div>
<div class="t" style="left:521px;width:103px;text-align:right;top:1032px;height:23px;line-height:22px;">1500</div>
<div class="t" style="left:626px;width:73px;text-align:right;top:1032px;height:23px;line-height:22px;">1596</div>
<div class="t" style="left:701px;width:178px;text-align:right;top:1032px;height:23px;line-height:22px;">0 bps</div>
<div class="t" style="left:881px;width:178px;text-align:right;top:1032px;height:23px;line-height:22px;">0 bps</div>
<div class="t" style="left:1061px;width:137px;text-align:right;top:1032px;height:23px;line-height:22px;"></div>
<div style="left:52px;top:1055px;width:1148px;height:23px;background:#fff"></div>
<div style="left:52px;top:1077px;width:1148px;height:1px;background:#e3e3e3"></div>
<div style="left:116px;top:1055px;width:1px;height:23px;background:#e3e3e3"></div>
<div style="left:266px;top:1055px;width:1px;height:23px;background:#e3e3e3"></div>
<div style="left:446px;top:1055px;width:1px;height:23px;background:#e3e3e3"></div>
<div style="left:521px;top:1055px;width:1px;height:23px;background:#e3e3e3"></div>
<div style="left:626px;top:1055px;width:1px;height:23px;background:#e3e3e3"></div>
<div style="left:701px;top:1055px;width:1px;height:23px;background:#e3e3e3"></div>
<div style="left:881px;top:1055px;width:1px;height:23px;background:#e3e3e3"></div>
<div style="left:1061px;top:1055px;width:1px;height:23px;background:#e3e3e3"></div>
<div style="left:1200px;top:1055px;width:1px;height:23px;background:#e3e3e3"></div>
<div class="t" style="left:55px;top:1055px;height:23px;line-height:22px;">RS</div>
<svg style="left:121px;top:1058px" width="17" height="17" viewBox="0 0 17 17"><path d="M4.7 3.2 L4.9 5.3 L2.8 7.9 L4.9 10.5 L4.7 12.8 L0 7.9 Z" fill="#c02a3a"/><path d="M11.2 3.2 L11 5.3 L13.1 7.9 L11 10.5 L11.2 12.8 L16 7.9 Z" fill="#c02a3a"/><rect x="7" y="0" width="1.9" height="4.8" rx="0.5" fill="#000"/><rect x="7" y="11.1" width="1.9" height="4.8" rx="0.5" fill="#000"/><circle cx="7.95" cy="7.95" r="1.9" fill="#111"/></svg>
<div class="t" style="left:143px;top:1055px;height:23px;line-height:22px;">ether5</div>
<div class="t" style="left:269px;top:1055px;height:23px;line-height:22px;">Ethernet</div>
<div class="t" style="left:446px;width:73px;text-align:right;top:1055px;height:23px;line-height:22px;">1500</div>
<div class="t" style="left:521px;width:103px;text-align:right;top:1055px;height:23px;line-height:22px;">1500</div>
<div class="t" style="left:626px;width:73px;text-align:right;top:1055px;height:23px;line-height:22px;">1596</div>
<div class="t" style="left:701px;width:178px;text-align:right;top:1055px;height:23px;line-height:22px;">88.0 kbps</div>
<div class="t" style="left:881px;width:178px;text-align:right;top:1055px;height:23px;line-height:22px;">8.8 kbps</div>
<div class="t" style="left:1061px;width:137px;text-align:right;top:1055px;height:23px;line-height:22px;"></div>
<div style="left:52px;top:1054px;width:1028px;height:23px;border:1px dotted #707070;box-sizing:border-box"></div>
<div style="left:52px;top:936px;width:1px;height:160px;background:#a0a0a0"></div>
</div>
<div style="left:35px;top:1113px;width:855px;height:6px;background:#a0a0a0"></div>
<div style="left:35px;top:1113px;width:8px;height:243px;background:#a0a0a0"></div>
<div style="left:62px;top:1113px;width:828px;height:2px;background:#000"></div>
<div class="clip" style="clip-path:inset(1118px 296px 87px 43px)">
<div style="left:43px;top:1119px;width:900px;height:237px;background:#f0f0f0"></div>
<div style="left:43px;top:1119px;width:900px;height:29px;background:#4f4fcc"></div>
<div style="left:43px;top:1119px;width:900px;height:1px;background:#8686da"></div>
<div style="left:43px;top:1147px;width:900px;height:1px;background:#4242c6"></div>
<div style="left:43px;top:1148px;width:900px;height:1px;background:#f8f8ee"></div>
<div class="t" style="left:49px;top:1121px;height:29px;line-height:29px;color:#fff">Interface List</div>
<div style="left:43px;top:1119px;width:1px;height:237px;background:#000"></div>
<div style="left:51px;top:1154px;width:79px;height:31px;background:#d9d9d9;border-top:1px solid #f4f4f4;box-sizing:border-box"></div>
<div style="left:129px;top:1154px;width:1px;height:31px;background:#a0a0a0"></div>
<div style="left:130px;top:1154px;width:1px;height:31px;background:#fafafa"></div>
<div class="t" style="left:51px;top:1154px;width:79px;height:31px;line-height:34px;text-align:center">Interface</div>
<div style="left:131px;top:1154px;width:108px;height:31px;background:#d9d9d9;border-top:1px solid #f4f4f4;box-sizing:border-box"></div>
<div style="left:238px;top:1154px;width:1px;height:31px;background:#a0a0a0"></div>
<div style="left:239px;top:1154px;width:1px;height:31px;background:#fafafa"></div>
<div class="t" style="left:131px;top:1154px;width:108px;height:31px;line-height:34px;text-align:center">Interface List</div>
<div style="left:240px;top:1154px;width:77px;height:31px;background:#d9d9d9;border-top:1px solid #f4f4f4;box-sizing:border-box"></div>
<div style="left:316px;top:1154px;width:1px;height:31px;background:#a0a0a0"></div>
<div style="left:317px;top:1154px;width:1px;height:31px;background:#fafafa"></div>
<div class="t" style="left:240px;top:1154px;width:77px;height:31px;line-height:34px;text-align:center">Ethernet</div>
<div style="left:318px;top:1154px;width:102px;height:31px;background:#d9d9d9;border-top:1px solid #f4f4f4;box-sizing:border-box"></div>
<div style="left:419px;top:1154px;width:1px;height:31px;background:#a0a0a0"></div>
<div style="left:420px;top:1154px;width:1px;height:31px;background:#fafafa"></div>
<div class="t" style="left:318px;top:1154px;width:102px;height:31px;line-height:34px;text-align:center">EoIP Tunnel</div>
<div style="left:420px;top:1154px;width:83px;height:31px;background:#d9d9d9;border-top:1px solid #f4f4f4;box-sizing:border-box"></div>
<div style="left:502px;top:1154px;width:1px;height:31px;background:#a0a0a0"></div>
<div style="left:503px;top:1154px;width:1px;height:31px;background:#fafafa"></div>
<div class="t" style="left:420px;top:1154px;width:83px;height:31px;line-height:34px;text-align:center">IP Tunnel</div>
<div style="left:503px;top:1154px;width:103px;height:31px;background:#d9d9d9;border-top:1px solid #f4f4f4;box-sizing:border-box"></div>
<div style="left:605px;top:1154px;width:1px;height:31px;background:#a0a0a0"></div>
<div style="left:606px;top:1154px;width:1px;height:31px;background:#fafafa"></div>
<div class="t" style="left:503px;top:1154px;width:103px;height:31px;line-height:34px;text-align:center">GRE Tunnel</div>
<div style="left:606px;top:1150px;width:61px;height:35px;background:#f0f0f0;border-left:1px solid #fff;border-top:1px solid #fff;box-sizing:border-box"></div>
<div style="left:666px;top:1150px;width:1px;height:35px;background:#a0a0a0"></div>
<div class="t" style="left:606px;top:1150px;width:61px;height:35px;line-height:37px;text-align:center">VLAN</div>
<div style="left:667px;top:1154px;width:59px;height:31px;background:#d9d9d9;border-top:1px solid #f4f4f4;box-sizing:border-box"></div>
<div style="left:725px;top:1154px;width:1px;height:31px;background:#a0a0a0"></div>
<div style="left:726px;top:1154px;width:1px;height:31px;background:#fafafa"></div>
<div class="t" style="left:667px;top:1154px;width:59px;height:31px;line-height:34px;text-align:center">VRRP</div>
<div style="left:726px;top:1154px;width:75px;height:31px;background:#d9d9d9;border-top:1px solid #f4f4f4;box-sizing:border-box"></div>
<div style="left:800px;top:1154px;width:1px;height:31px;background:#a0a0a0"></div>
<div style="left:801px;top:1154px;width:1px;height:31px;background:#fafafa"></div>
<div class="t" style="left:726px;top:1154px;width:75px;height:31px;line-height:34px;text-align:center">Bonding</div>
<div style="left:801px;top:1154px;width:45px;height:31px;background:#d9d9d9;border-top:1px solid #f4f4f4;box-sizing:border-box"></div>
<div style="left:845px;top:1154px;width:1px;height:31px;background:#a0a0a0"></div>
<div style="left:846px;top:1154px;width:1px;height:31px;background:#fafafa"></div>
<div class="t" style="left:801px;top:1154px;width:45px;height:31px;line-height:34px;text-align:center">LTE</div>
<div style="left:43px;top:1118px;width:847px;height:1px;background:#000"></div>
<div style="left:46px;top:1185px;width:850px;height:1px;background:#fff"></div>
<div style="left:46px;top:1185px;width:1px;height:180px;background:#fff"></div>
<div style="left:48px;top:1189px;width:31px;height:32px;border:1px solid #a0a0a0;box-sizing:border-box;background:#f0f0f0;box-shadow:inset 1px 1px 0 #fff, 1px 1px 0 #fff"></div>
<svg style="left:55px;top:1197px" width="15" height="15" viewBox="0 0 15 15"><path d="M5.5 0.5h4v5h5v4h-5v5h-4v-5h-5v-4h5z" fill="#0000ff" stroke="#000" stroke-width="1"/></svg>
<div style="left:82px;top:1189px;width:31px;height:32px;border:1px solid #a0a0a0;box-sizing:border-box;background:#f0f0f0;box-shadow:inset 1px 1px 0 #fff, 1px 1px 0 #fff"></div>
<svg style="left:89px;top:1202px" width="17" height="6" viewBox="0 0 17 6"><rect x="1.5" y="1.5" width="15" height="4" fill="#fff" stroke="none"/><rect x="0.5" y="0.5" width="15" height="4" fill="#f4f4f4" stroke="#a0a0a0"/></svg>
<div style="left:122px;top:1189px;width:31px;height:32px;border:1px solid #a0a0a0;box-sizing:border-box;background:#f0f0f0;box-shadow:inset 1px 1px 0 #fff, 1px 1px 0 #fff"></div>
<svg style="left:122px;top:1189px" width="31" height="32" viewBox="0 0 31 32"><path d="M6.4 16.5 L9.5 13.1 L12.5 16.4 L19.9 9.2 L22.8 12.1 L12.5 22.5 Z" fill="#f6f6f6" stroke="#9a9a9a" stroke-width="1" stroke-linejoin="round"/></svg>
<div style="left:156px;top:1189px;width:31px;height:32px;border:1px solid #a0a0a0;box-sizing:border-box;background:#f0f0f0;box-shadow:inset 1px 1px 0 #fff, 1px 1px 0 #fff"></div>
<svg style="left:156px;top:1189px" width="31" height="32" viewBox="0 0 31 32"><path d="M6.3 11.4 L8.9 9.2 L13.9 13.6 L18.9 9.2 L21.6 11.4 L16.3 16.4 L21.6 21.4 L18.9 23.5 L13.9 19.2 L8.9 23.5 L6.3 21.4 L11.5 16.4 Z" fill="#f6f6f6" stroke="#9a9a9a" stroke-width="1" stroke-linejoin="round"/></svg>
<div style="left:196px;top:1189px;width:31px;height:32px;border:1px solid #a0a0a0;box-sizing:border-box;background:#f0f0f0;box-shadow:inset 1px 1px 0 #fff, 1px 1px 0 #fff"></div>
<svg style="left:196px;top:1189px" width="31" height="32" viewBox="0 0 31 32"><path d="M5.5 13.5 L9.5 9.5 H22.5 V22.5 H5.5 Z" fill="#f8f8f8" stroke="#9a9a9a" stroke-width="1.1"/><path d="M5.5 13.5 H9.5 V9.5" fill="#fff" stroke="#9a9a9a" stroke-width="1"/><path d="M13 12.5h2M16 12.5h3M8 15.5h4M13 15.5h3M18 15.5h3" stroke="#9a9a9a" stroke-width="1"/></svg>
<div style="left:236px;top:1189px;width:31px;height:32px;border:1px solid #a0a0a0;box-sizing:border-box;background:#f0f0f0;box-shadow:inset 1px 1px 0 #fff, 1px 1px 0 #fff"></div>
<svg style="left:236px;top:1189px" width="31" height="32" viewBox="0 0 31 32"><defs><linearGradient id="fg" x1="0" x2="1" y1="0" y2="0"><stop offset="0" stop-color="#f4f6ff"/><stop offset="0.35" stop-color="#c8d2f8"/><stop offset="0.45" stop-color="#8c9de0"/><stop offset="1" stop-color="#6a7cc8"/></linearGradient><linearGradient id="fs" x1="0" x2="1" y1="0" y2="0"><stop offset="0" stop-color="#d0dcff"/><stop offset="1" stop-color="#98a8e8"/></linearGradient></defs><path d="M6.5 8 H22.5 L16.6 14.4 V24.3 H12.4 V14.4 Z" fill="url(#fg)" stroke="#000" stroke-width="1.1" stroke-linejoin="round"/><rect x="13" y="14.5" width="3" height="9.3" fill="url(#fs)"/><path d="M6.3 7.6 H22.7" stroke="#000" stroke-width="1.6"/></svg>
<div style="left:48px;top:1224px;width:850px;height:140px;background:#fff"></div>
<div style="left:48px;top:1224px;width:952px;height:27px;background:#f0f0f0;border-top:1px solid #a0a0a0;border-left:1px solid #a0a0a0;border-bottom:1px solid #a0a0a0;box-sizing:border-box"></div>
<div style="left:112px;top:1224px;width:1px;height:27px;background:#a0a0a0"></div>
<div style="left:49px;top:1225px;width:63px;height:1px;background:#fff"></div>
<div style="left:262px;top:1224px;width:1px;height:27px;background:#a0a0a0"></div>
<div style="left:113px;top:1225px;width:149px;height:1px;background:#fff"></div>
<div class="t" style="left:115px;top:1225px;height:26px;line-height:27px">Name</div>
<div style="left:442px;top:1224px;width:1px;height:27px;background:#a0a0a0"></div>
<div style="left:263px;top:1225px;width:179px;height:1px;background:#fff"></div>
<div class="t" style="left:265px;top:1225px;height:26px;line-height:27px">Type</div>
<div style="left:517px;top:1224px;width:1px;height:27px;background:#a0a0a0"></div>
<div style="left:443px;top:1225px;width:74px;height:1px;background:#fff"></div>
<div class="t" style="left:445px;top:1225px;height:26px;line-height:27px">MTU</div>
<div style="left:622px;top:1224px;width:1px;height:27px;background:#a0a0a0"></div>
<div style="left:518px;top:1225px;width:104px;height:1px;background:#fff"></div>
<div class="t" style="left:520px;top:1225px;height:26px;line-height:27px">Actual MTU</div>
<div style="left:697px;top:1224px;width:1px;height:27px;background:#a0a0a0"></div>
<div style="left:623px;top:1225px;width:74px;height:1px;background:#fff"></div>
<div class="t" style="left:625px;top:1225px;height:26px;line-height:27px">L2 MTU</div>
<div style="left:877px;top:1224px;width:1px;height:27px;background:#a0a0a0"></div>
<div style="left:698px;top:1225px;width:179px;height:1px;background:#fff"></div>
<div class="t" style="left:700px;top:1225px;height:26px;line-height:27px">Tx</div>
<div style="left:1000px;top:1224px;width:1px;height:27px;background:#a0a0a0"></div>
<div style="left:878px;top:1225px;width:122px;height:1px;background:#fff"></div>
<div class="t" style="left:880px;top:1225px;height:26px;line-height:27px">R</div>
<svg style="left:246px;top:1231px" width="12" height="12" viewBox="0 0 12 12"><path d="M6 0.5 L11.5 10.5 H0.5" fill="none" stroke="#fff" stroke-width="1.2"/><rect x="5" y="1" width="1" height="1" fill="#8a8a8a"/><rect x="5" y="2" width="1" height="1" fill="#c8c8c8"/><rect x="4" y="3" width="1" height="1" fill="#8a8a8a"/><rect x="4" y="4" width="1" height="1" fill="#c8c8c8"/><rect x="3" y="5" width="1" height="1" fill="#8a8a8a"/><rect x="3" y="6" width="1" height="1" fill="#c8c8c8"/><rect x="2" y="7" width="1" height="1" fill="#8a8a8a"/><rect x="2" y="8" width="1" height="1" fill="#c8c8c8"/><rect x="1" y="9" width="1" height="1" fill="#8a8a8a"/><rect x="1" y="10" width="1" height="1" fill="#c8c8c8"/><rect x="0" y="11" width="1" height="1" fill="#8a8a8a"/><rect x="0" y="12" width="1" height="1" fill="#c8c8c8"/></svg>
<div style="left:48px;top:1251px;width:952px;height:23px;background:#fff"></div>
<div style="left:48px;top:1273px;width:952px;height:1px;background:#e3e3e3"></div>
<div style="left:112px;top:1251px;width:1px;height:23px;background:#e3e3e3"></div>
<div style="left:262px;top:1251px;width:1px;height:23px;background:#e3e3e3"></div>
<div style="left:442px;top:1251px;width:1px;height:23px;background:#e3e3e3"></div>
<div style="left:517px;top:1251px;width:1px;height:23px;background:#e3e3e3"></div>
<div style="left:622px;top:1251px;width:1px;height:23px;background:#e3e3e3"></div>
<div style="left:697px;top:1251px;width:1px;height:23px;background:#e3e3e3"></div>
<div style="left:877px;top:1251px;width:1px;height:23px;background:#e3e3e3"></div>
<div style="left:1000px;top:1251px;width:1px;height:23px;background:#e3e3e3"></div>
<div class="t" style="left:51px;top:1251px;height:23px;line-height:22px;"></div>
<svg style="left:117px;top:1254px" width="17" height="15" viewBox="0 0 17 15"><defs><linearGradient id="vg" x1="0" x2="0" y1="0" y2="1"><stop offset="0.1" stop-color="#22c0ff"/><stop offset="0.5" stop-color="#1c9ae8"/><stop offset="0.95" stop-color="#062c86"/></linearGradient></defs><path d="M5.7 2.0 L5.7 5.5 L3.4 7.9 L5.7 10.3 L5.7 13.8 L0 7.9 Z" fill="url(#vg)"/><path d="M10.3 2.0 L16 7.9 L10.3 13.8 L10.3 10.3 L12.6 7.9 L10.3 5.5 Z" fill="url(#vg)"/><path d="M5.4 7.9 H11.8" stroke="#0c8ee0" stroke-width="1.8"/><path d="M6.6 6.3 V9.5 M9.4 6.3 V9.5" stroke="#0a86d8" stroke-width="1.2" stroke-linecap="round"/></svg>
<div class="t" style="left:139px;top:1251px;height:23px;line-height:22px;">vlan_eth2</div>
<div class="t" style="left:265px;top:1251px;height:23px;line-height:22px;">VLAN</div>
<div class="t" style="left:442px;width:73px;text-align:right;top:1251px;height:23px;line-height:22px;">1500</div>
<div class="t" style="left:517px;width:103px;text-align:right;top:1251px;height:23px;line-height:22px;">1500</div>
<div class="t" style="left:622px;width:73px;text-align:right;top:1251px;height:23px;line-height:22px;">1592</div>
<div class="t" style="left:697px;width:178px;text-align:right;top:1251px;height:23px;line-height:22px;">0 bps</div>
<div class="t" style="left:877px;width:121px;text-align:right;top:1251px;height:23px;line-height:22px;"></div>
<div style="left:48px;top:1274px;width:952px;height:23px;background:#fff"></div>
<div style="left:48px;top:1296px;width:952px;height:1px;background:#e3e3e3"></div>
<div style="left:112px;top:1274px;width:1px;height:23px;background:#e3e3e3"></div>
<div style="left:262px;top:1274px;width:1px;height:23px;background:#e3e3e3"></div>
<div style="left:442px;top:1274px;width:1px;height:23px;background:#e3e3e3"></div>
<div style="left:517px;top:1274px;width:1px;height:23px;background:#e3e3e3"></div>
<div style="left:622px;top:1274px;width:1px;height:23px;background:#e3e3e3"></div>
<div style="left:697px;top:1274px;width:1px;height:23px;background:#e3e3e3"></div>
<div style="left:877px;top:1274px;width:1px;height:23px;background:#e3e3e3"></div>
<div style="left:1000px;top:1274px;width:1px;height:23px;background:#e3e3e3"></div>
<div class="t" style="left:51px;top:1274px;height:23px;line-height:22px;">R</div>
<svg style="left:117px;top:1277px" width="17" height="15" viewBox="0 0 17 15"><defs><linearGradient id="vg" x1="0" x2="0" y1="0" y2="1"><stop offset="0.1" stop-color="#22c0ff"/><stop offset="0.5" stop-color="#1c9ae8"/><stop offset="0.95" stop-color="#062c86"/></linearGradient></defs><path d="M5.7 2.0 L5.7 5.5 L3.4 7.9 L5.7 10.3 L5.7 13.8 L0 7.9 Z" fill="url(#vg)"/><path d="M10.3 2.0 L16 7.9 L10.3 13.8 L10.3 10.3 L12.6 7.9 L10.3 5.5 Z" fill="url(#vg)"/><path d="M5.4 7.9 H11.8" stroke="#0c8ee0" stroke-width="1.8"/><path d="M6.6 6.3 V9.5 M9.4 6.3 V9.5" stroke="#0a86d8" stroke-width="1.2" stroke-linecap="round"/></svg>
<div class="t" style="left:139px;top:1274px;height:23px;line-height:22px;">vlan_eth3</div>
<div class="t" style="left:265px;top:1274px;height:23px;line-height:22px;">VLAN</div>
<div class="t" style="left:442px;width:73px;text-align:right;top:1274px;height:23px;line-height:22px;">1500</div>
<div class="t" style="left:517px;width:103px;text-align:right;top:1274px;height:23px;line-height:22px;">1500</div>
<div class="t" style="left:622px;width:73px;text-align:right;top:1274px;height:23px;line-height:22px;">1592</div>
<div class="t" style="left:697px;width:178px;text-align:right;top:1274px;height:23px;line-height:22px;">0 bps</div>
<div class="t" style="left:877px;width:121px;text-align:right;top:1274px;height:23px;line-height:22px;"></div>
<div style="left:48px;top:1297px;width:952px;height:23px;background:#fff"></div>
<div style="left:48px;top:1319px;width:952px;height:1px;background:#e3e3e3"></div>
<div style="left:112px;top:1297px;width:1px;height:23px;background:#e3e3e3"></div>
<div style="left:262px;top:1297px;width:1px;height:23px;background:#e3e3e3"></div>
<div style="left:442px;top:1297px;width:1px;height:23px;background:#e3e3e3"></div>
<div style="left:517px;top:1297px;width:1px;height:23px;background:#e3e3e3"></div>
<div style="left:622px;top:1297px;width:1px;height:23px;background:#e3e3e3"></div>
<div style="left:697px;top:1297px;width:1px;height:23px;background:#e3e3e3"></div>
<div style="left:877px;top:1297px;width:1px;height:23px;background:#e3e3e3"></div>
<div style="left:1000px;top:1297px;width:1px;height:23px;background:#e3e3e3"></div>
<div class="t" style="left:51px;top:1297px;height:23px;line-height:22px;"></div>
<svg style="left:117px;top:1300px" width="17" height="15" viewBox="0 0 17 15"><defs><linearGradient id="vg" x1="0" x2="0" y1="0" y2="1"><stop offset="0.1" stop-color="#22c0ff"/><stop offset="0.5" stop-color="#1c9ae8"/><stop offset="0.95" stop-color="#062c86"/></linearGradient></defs><path d="M5.7 2.0 L5.7 5.5 L3.4 7.9 L5.7 10.3 L5.7 13.8 L0 7.9 Z" fill="url(#vg)"/><path d="M10.3 2.0 L16 7.9 L10.3 13.8 L10.3 10.3 L12.6 7.9 L10.3 5.5 Z" fill="url(#vg)"/><path d="M5.4 7.9 H11.8" stroke="#0c8ee0" stroke-width="1.8"/><path d="M6.6 6.3 V9.5 M9.4 6.3 V9.5" stroke="#0a86d8" stroke-width="1.2" stroke-linecap="round"/></svg>
<div class="t" style="left:139px;top:1297px;height:23px;line-height:22px;">vlan_eth4</div>
<div class="t" style="left:265px;top:1297px;height:23px;line-height:22px;">VLAN</div>
<div class="t" style="left:442px;width:73px;text-align:right;top:1297px;height:23px;line-height:22px;">1500</div>
<div class="t" style="left:517px;width:103px;text-align:right;top:1297px;height:23px;line-height:22px;">1500</div>
<div class="t" style="left:622px;width:73px;text-align:right;top:1297px;height:23px;line-height:22px;">1592</div>
<div class="t" style="left:697px;width:178px;text-align:right;top:1297px;height:23px;line-height:22px;">0 bps</div>
<div class="t" style="left:877px;width:121px;text-align:right;top:1297px;height:23px;line-height:22px;"></div>
<div style="left:48px;top:1320px;width:952px;height:23px;background:#fff"></div>
<div style="left:48px;top:1342px;width:952px;height:1px;background:#e3e3e3"></div>
<div style="left:112px;top:1320px;width:1px;height:23px;background:#e3e3e3"></div>
<div style="left:262px;top:1320px;width:1px;height:23px;background:#e3e3e3"></div>
<div style="left:442px;top:1320px;width:1px;height:23px;background:#e3e3e3"></div>
<div style="left:517px;top:1320px;width:1px;height:23px;background:#e3e3e3"></div>
<div style="left:622px;top:1320px;width:1px;height:23px;background:#e3e3e3"></div>
<div style="left:697px;top:1320px;width:1px;height:23px;background:#e3e3e3"></div>
<div style="left:877px;top:1320px;width:1px;height:23px;background:#e3e3e3"></div>
<div style="left:1000px;top:1320px;width:1px;height:23px;background:#e3e3e3"></div>
<div class="t" style="left:51px;top:1320px;height:23px;line-height:22px;">R</div>
<svg style="left:117px;top:1323px" width="17" height="15" viewBox="0 0 17 15"><defs><linearGradient id="vg" x1="0" x2="0" y1="0" y2="1"><stop offset="0.1" stop-color="#22c0ff"/><stop offset="0.5" stop-color="#1c9ae8"/><stop offset="0.95" stop-color="#062c86"/></linearGradient></defs><path d="M5.7 2.0 L5.7 5.5 L3.4 7.9 L5.7 10.3 L5.7 13.8 L0 7.9 Z" fill="url(#vg)"/><path d="M10.3 2.0 L16 7.9 L10.3 13.8 L10.3 10.3 L12.6 7.9 L10.3 5.5 Z" fill="url(#vg)"/><path d="M5.4 7.9 H11.8" stroke="#0c8ee0" stroke-width="1.8"/><path d="M6.6 6.3 V9.5 M9.4 6.3 V9.5" stroke="#0a86d8" stroke-width="1.2" stroke-linecap="round"/></svg>
<div class="t" style="left:139px;top:1320px;height:23px;line-height:22px;">vlan_eth5</div>
<div class="t" style="left:265px;top:1320px;height:23px;line-height:22px;">VLAN</div>
<div class="t" style="left:442px;width:73px;text-align:right;top:1320px;height:23px;line-height:22px;">1500</div>
<div class="t" style="left:517px;width:103px;text-align:right;top:1320px;height:23px;line-height:22px;">1500</div>
<div class="t" style="left:622px;width:73px;text-align:right;top:1320px;height:23px;line-height:22px;">1592</div>
<div class="t" style="left:697px;width:178px;text-align:right;top:1320px;height:23px;line-height:22px;">0 bps</div>
<div class="t" style="left:877px;width:121px;text-align:right;top:1320px;height:23px;line-height:22px;"></div>
<div style="left:49px;top:1273px;width:851px;height:23px;border:1px dotted #707070;box-sizing:border-box"></div>
<div style="left:48px;top:1224px;width:1px;height:140px;background:#a0a0a0"></div>
</div>
<div class="clip" style="clip-path:inset(1113px 88px 99px 895px)">
<div style="left:895px;top:1113px;width:203px;height:6px;background:#a0a0a0"></div>
<div style="left:895px;top:1118px;width:203px;height:1px;background:#000"></div>
<div style="left:895px;top:1119px;width:203px;height:29px;background:#4f4fcc"></div>
<div style="left:895px;top:1119px;width:203px;height:1px;background:#7878d8"></div>
<div style="left:895px;top:1147px;width:203px;height:1px;background:#3e3ec6"></div>
<div style="left:895px;top:1148px;width:203px;height:200px;background:#f0f0f0"></div>
<div style="left:895px;top:1148px;width:203px;height:1px;background:#fafaf0"></div>
<div style="left:895px;top:1186px;width:203px;height:1px;background:#fff"></div>
<div style="left:895px;top:1225px;width:203px;height:120px;background:#fff"></div>
<div style="left:893px;top:1225px;width:307px;height:27px;background:#f0f0f0;border-top:1px solid #a0a0a0;border-left:1px solid #a0a0a0;border-bottom:1px solid #a0a0a0;box-sizing:border-box"></div>
<div style="left:968px;top:1225px;width:1px;height:27px;background:#a0a0a0"></div>
<div style="left:894px;top:1226px;width:74px;height:1px;background:#fff"></div>
<div class="t" style="left:896px;top:1226px;height:26px;line-height:27px">VLAN ID</div>
<div style="left:1088px;top:1225px;width:1px;height:27px;background:#a0a0a0"></div>
<div style="left:969px;top:1226px;width:119px;height:1px;background:#fff"></div>
<div class="t" style="left:971px;top:1226px;height:26px;line-height:27px">Interface</div>
<div style="left:1200px;top:1225px;width:1px;height:27px;background:#a0a0a0"></div>
<div style="left:1089px;top:1226px;width:111px;height:1px;background:#fff"></div>
<div style="left:893px;top:1252px;width:307px;height:23px;background:#fff"></div>
<div style="left:893px;top:1274px;width:307px;height:1px;background:#e3e3e3"></div>
<div style="left:968px;top:1252px;width:1px;height:23px;background:#e3e3e3"></div>
<div style="left:1088px;top:1252px;width:1px;height:23px;background:#e3e3e3"></div>
<div style="left:1200px;top:1252px;width:1px;height:23px;background:#e3e3e3"></div>
<div class="t" style="left:893px;width:73px;text-align:right;top:1252px;height:23px;line-height:22px;">2</div>
<div class="t" style="left:971px;top:1252px;height:23px;line-height:22px;font-style:italic">ether2</div>
<div class="t" style="left:1091px;top:1252px;height:23px;line-height:22px;"></div>
<div style="left:893px;top:1275px;width:307px;height:23px;background:#fff"></div>
<div style="left:893px;top:1297px;width:307px;height:1px;background:#e3e3e3"></div>
<div style="left:968px;top:1275px;width:1px;height:23px;background:#e3e3e3"></div>
<div style="left:1088px;top:1275px;width:1px;height:23px;background:#e3e3e3"></div>
<div style="left:1200px;top:1275px;width:1px;height:23px;background:#e3e3e3"></div>
<div class="t" style="left:893px;width:73px;text-align:right;top:1275px;height:23px;line-height:22px;">3</div>
<div class="t" style="left:971px;top:1275px;height:23px;line-height:22px;">ether3</div>
<div class="t" style="left:1091px;top:1275px;height:23px;line-height:22px;"></div>
<div style="left:893px;top:1298px;width:307px;height:23px;background:#fff"></div>
<div style="left:893px;top:1320px;width:307px;height:1px;background:#e3e3e3"></div>
<div style="left:968px;top:1298px;width:1px;height:23px;background:#e3e3e3"></div>
<div style="left:1088px;top:1298px;width:1px;height:23px;background:#e3e3e3"></div>
<div style="left:1200px;top:1298px;width:1px;height:23px;background:#e3e3e3"></div>
<div class="t" style="left:893px;width:73px;text-align:right;top:1298px;height:23px;line-height:22px;">4</div>
<div class="t" style="left:971px;top:1298px;height:23px;line-height:22px;font-style:italic">ether4</div>
<div class="t" style="left:1091px;top:1298px;height:23px;line-height:22px;"></div>
<div style="left:893px;top:1321px;width:307px;height:23px;background:#fff"></div>
<div style="left:893px;top:1343px;width:307px;height:1px;background:#e3e3e3"></div>
<div style="left:968px;top:1321px;width:1px;height:23px;background:#e3e3e3"></div>
<div style="left:1088px;top:1321px;width:1px;height:23px;background:#e3e3e3"></div>
<div style="left:1200px;top:1321px;width:1px;height:23px;background:#e3e3e3"></div>
<div class="t" style="left:893px;width:73px;text-align:right;top:1321px;height:23px;line-height:22px;">5</div>
<div class="t" style="left:971px;top:1321px;height:23px;line-height:22px;">ether5</div>
<div class="t" style="left:1091px;top:1321px;height:23px;line-height:22px;"></div>
<div style="left:893px;top:1274px;width:220px;height:24px;border-top:1px dotted #707070;border-bottom:1px dotted #707070;box-sizing:border-box"></div>
</div>
</body></html>
